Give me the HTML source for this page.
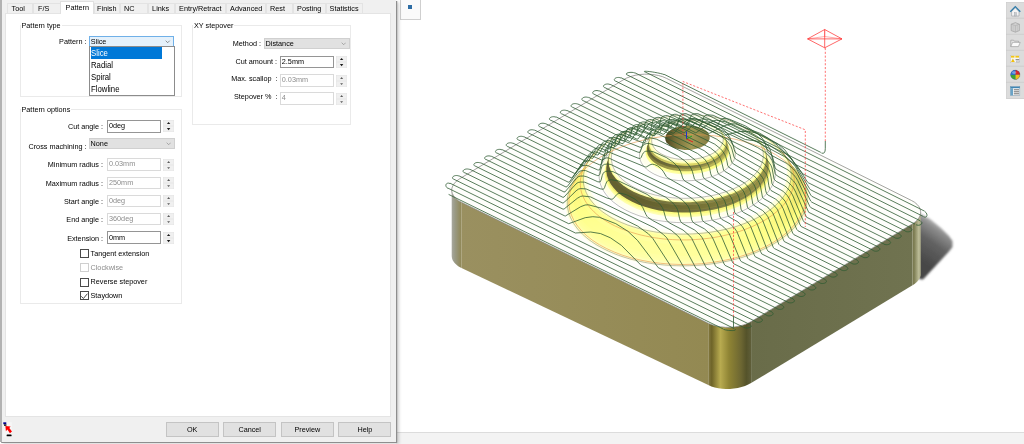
<!DOCTYPE html><html><head><meta charset="utf-8"><title>Pattern</title><style>html,body{margin:0;padding:0;}
body{width:1024px;height:444px;overflow:hidden;background:#fff;position:relative;font-family:"Liberation Sans",Arial,sans-serif;font-size:7.25px;color:#000;}
#view{position:absolute;left:0;top:0;width:1024px;height:444px;}
#status{position:absolute;left:396px;top:432px;width:628px;height:12px;background:#f3f3f3;border-top:1.3px solid #dcdcdc;}
#dlg{position:absolute;left:0;top:0;width:396px;height:442.3px;background:#f0f0f0;box-shadow:1.2px 1px 0 #8e8e8e, 3px 2px 3px rgba(0,0,0,0.18);}
#dlg>*{position:absolute;}
#dlg{will-change:transform}
#dlg{left:0}
.tabs{left:0;top:0;width:396px;height:14px;}
.tab{position:absolute;top:2.6px;height:11px;box-sizing:border-box;border:0.7px solid #e3e3e3;border-bottom:none;background:#f0f0f0;}
.tab span{position:absolute;top:0.7px;white-space:nowrap;}
.tab.sel{top:1.2px;height:13px;background:#fff;border-color:#e0e0e0;}
.tab.sel span{top:0.9px}
.panel{left:5.4px;top:13.4px;width:385.4px;height:403.6px;background:#fff;border:0.6px solid #e4e4e4;box-sizing:border-box;}
.grp{border:0.7px solid #eaeaea;box-sizing:border-box;}
.glab{background:#fff;padding:0 1px;line-height:9px;white-space:nowrap}
.lab{text-align:right;line-height:9px;white-space:nowrap;}
.combo{background:#e1e1e1;border:0.6px solid #d0d0d0;box-sizing:border-box;}
.combo.hot{background:#e5f1fb;border:0.7px solid #6fb0e8;}
.combo span{position:absolute;left:0.6px;top:0.3px;line-height:9px}
.chev{position:absolute;right:2.6px;top:3.1px;width:5.4px;height:3.4px}
.ddl{background:#fff;border:0.7px solid #8c8c8c;box-sizing:border-box;font-size:9.3px;}
.it{position:relative;height:12px;line-height:12.8px;padding-left:0.6px;margin:0 11.3px 0 0.6px;white-space:nowrap}
.it span{display:inline-block;transform:scaleX(0.835);transform-origin:0 50%}
.it.selit{background:#0078d7;color:#fff;height:11.6px;margin-top:0px;margin-bottom:0.4px;line-height:12.8px}
.inp{background:#fff;border:0.75px solid #959595;box-sizing:border-box;}
.inp span{position:absolute;left:1px;top:0.6px;line-height:9px}
.inp.dis{border-color:#dadada;color:#8c8c8c}
.inp.dis span{top:0}
.spin{width:11px;height:12px}
.spin svg{display:block}
.cb{width:9px;height:9px;border:0.8px solid #4a4a4a;background:#fff;box-sizing:border-box;}
.cb.dis{border-color:#cfcfcf}
.cbl{line-height:9px;white-space:nowrap;}
.cbl.dis{color:#8c8c8c}
.btn{top:422px;width:53px;height:15px;background:#e1e1e1;border:0.7px solid #c4c4c4;box-sizing:border-box;text-align:center;line-height:14px;}
</style></head><body><svg id="view" width="1024" height="444" viewBox="0 0 1024 444"><defs><linearGradient id="sh" gradientUnits="userSpaceOnUse" x1="922" y1="262" x2="947" y2="226"><stop offset="0" stop-color="#474747"/><stop offset="0.5" stop-color="#626262"/><stop offset="0.8" stop-color="#8e8e8e"/><stop offset="1" stop-color="#cfcfcf"/></linearGradient><filter id="bl" x="-20%" y="-20%" width="140%" height="140%"><feGaussianBlur stdDeviation="0.9"/></filter><linearGradient id="lf" gradientUnits="userSpaceOnUse" x1="460" y1="0" x2="710" y2="0"><stop offset="0" stop-color="#9a9060"/><stop offset="1" stop-color="#938952"/></linearGradient><linearGradient id="rf" gradientUnits="userSpaceOnUse" x1="747" y1="0" x2="916" y2="0"><stop offset="0" stop-color="#696c49"/><stop offset="1" stop-color="#707350"/></linearGradient><linearGradient id="fc" gradientUnits="userSpaceOnUse" x1="707.4" y1="0" x2="750.7" y2="0"><stop offset="0" stop-color="#8a7f48"/><stop offset="0.1" stop-color="#6e6428"/><stop offset="0.3" stop-color="#b8ab50"/><stop offset="0.5" stop-color="#8f8434"/><stop offset="0.78" stop-color="#6c6632"/><stop offset="0.9" stop-color="#55532a"/><stop offset="1" stop-color="#5e5d38"/></linearGradient><linearGradient id="lc" gradientUnits="userSpaceOnUse" x1="449" y1="0" x2="462" y2="0"><stop offset="0" stop-color="#b4b4b4"/><stop offset="0.45" stop-color="#9a9a86"/><stop offset="1" stop-color="#8f8550"/></linearGradient><linearGradient id="rc" gradientUnits="userSpaceOnUse" x1="914" y1="0" x2="923" y2="0"><stop offset="0" stop-color="#7c7c52"/><stop offset="0.5" stop-color="#b9b994"/><stop offset="1" stop-color="#a0a07c"/></linearGradient><linearGradient id="d1" gradientUnits="userSpaceOnUse" x1="695.6" y1="132.8" x2="679.4" y2="269.9"><stop offset="0" stop-color="#fffff4"/><stop offset=".25" stop-color="#fffff8"/><stop offset=".5" stop-color="#fffffb"/><stop offset=".75" stop-color="#ffffff"/><stop offset="1" stop-color="#ffffff"/></linearGradient><linearGradient id="d2" gradientUnits="userSpaceOnUse" x1="695.5" y1="133.1" x2="679.4" y2="269.4"><stop offset="0" stop-color="#ffffd7"/><stop offset=".25" stop-color="#ffffe1"/><stop offset=".5" stop-color="#ffffec"/><stop offset=".75" stop-color="#fffff6"/><stop offset="1" stop-color="#ffffff"/></linearGradient><linearGradient id="d3" gradientUnits="userSpaceOnUse" x1="695.5" y1="133.3" x2="679.5" y2="268.8"><stop offset="0" stop-color="#ffffb6"/><stop offset=".25" stop-color="#ffffc5"/><stop offset=".5" stop-color="#ffffd4"/><stop offset=".75" stop-color="#ffffe3"/><stop offset="1" stop-color="#fffff3"/></linearGradient><linearGradient id="d4" gradientUnits="userSpaceOnUse" x1="695.4" y1="133.3" x2="679.5" y2="268.1"><stop offset="0" stop-color="#ffffa4"/><stop offset=".25" stop-color="#ffffb4"/><stop offset=".5" stop-color="#ffffc5"/><stop offset=".75" stop-color="#ffffd6"/><stop offset="1" stop-color="#ffffe8"/></linearGradient><linearGradient id="d5" gradientUnits="userSpaceOnUse" x1="695.4" y1="133.3" x2="679.6" y2="267.3"><stop offset="0" stop-color="#ffff8c"/><stop offset=".25" stop-color="#ffff9e"/><stop offset=".5" stop-color="#ffffb0"/><stop offset=".75" stop-color="#ffffc4"/><stop offset="1" stop-color="#ffffd8"/></linearGradient><linearGradient id="d6" gradientUnits="userSpaceOnUse" x1="695.3" y1="133.1" x2="679.6" y2="266.3"><stop offset="0" stop-color="#fffa78"/><stop offset=".25" stop-color="#ffff8a"/><stop offset=".5" stop-color="#ffff9e"/><stop offset=".75" stop-color="#ffffb2"/><stop offset="1" stop-color="#ffffc8"/></linearGradient><linearGradient id="d7" gradientUnits="userSpaceOnUse" x1="695.3" y1="132.8" x2="679.7" y2="265.2"><stop offset="0" stop-color="#eae46e"/><stop offset=".25" stop-color="#ffff80"/><stop offset=".5" stop-color="#ffff93"/><stop offset=".75" stop-color="#ffffa8"/><stop offset="1" stop-color="#ffffbe"/></linearGradient><linearGradient id="d8" gradientUnits="userSpaceOnUse" x1="695.2" y1="132.4" x2="679.7" y2="264.1"><stop offset="0" stop-color="#d5cf64"/><stop offset=".25" stop-color="#fbf476"/><stop offset=".5" stop-color="#ffff89"/><stop offset=".75" stop-color="#ffff9e"/><stop offset="1" stop-color="#ffffb4"/></linearGradient><linearGradient id="d9" gradientUnits="userSpaceOnUse" x1="695.2" y1="131.9" x2="679.8" y2="262.8"><stop offset="0" stop-color="#c1bc5b"/><stop offset=".25" stop-color="#e7e16c"/><stop offset=".5" stop-color="#ffff80"/><stop offset=".75" stop-color="#ffff95"/><stop offset="1" stop-color="#ffffab"/></linearGradient><linearGradient id="d10" gradientUnits="userSpaceOnUse" x1="695.1" y1="130.8" x2="679.9" y2="260.1"><stop offset="0" stop-color="#b8b356"/><stop offset=".25" stop-color="#ddd768"/><stop offset=".5" stop-color="#ffff7b"/><stop offset=".75" stop-color="#ffff90"/><stop offset="1" stop-color="#ffffa6"/></linearGradient><linearGradient id="d11" gradientUnits="userSpaceOnUse" x1="695" y1="129.5" x2="679.9" y2="257.3"><stop offset="0" stop-color="#aba650"/><stop offset=".25" stop-color="#cfc961"/><stop offset=".5" stop-color="#f7f174"/><stop offset=".75" stop-color="#ffff89"/><stop offset="1" stop-color="#ffff9f"/></linearGradient><linearGradient id="d12" gradientUnits="userSpaceOnUse" x1="694.9" y1="128" x2="680" y2="254.3"><stop offset="0" stop-color="#aba650"/><stop offset=".25" stop-color="#cfca61"/><stop offset=".5" stop-color="#f8f174"/><stop offset=".75" stop-color="#ffff89"/><stop offset="1" stop-color="#ffff9f"/></linearGradient><linearGradient id="d13" gradientUnits="userSpaceOnUse" x1="694.7" y1="123.9" x2="680.3" y2="245.7"><stop offset="0" stop-color="#b0ab52"/><stop offset=".25" stop-color="#d4cf63"/><stop offset=".5" stop-color="#fdf677"/><stop offset=".75" stop-color="#ffff8c"/><stop offset="1" stop-color="#ffffa2"/></linearGradient><linearGradient id="d14" gradientUnits="userSpaceOnUse" x1="694.4" y1="120" x2="680.6" y2="237.3"><stop offset="0" stop-color="#c2bd5b"/><stop offset=".25" stop-color="#e8e16d"/><stop offset=".5" stop-color="#ffff80"/><stop offset=".75" stop-color="#ffff95"/><stop offset="1" stop-color="#ffffab"/></linearGradient><linearGradient id="d15" gradientUnits="userSpaceOnUse" x1="694.3" y1="119.4" x2="680.6" y2="236"><stop offset="0" stop-color="#f0e970"/><stop offset=".25" stop-color="#ffff82"/><stop offset=".5" stop-color="#ffff96"/><stop offset=".75" stop-color="#ffffab"/><stop offset="1" stop-color="#ffffc0"/></linearGradient><linearGradient id="d16" gradientUnits="userSpaceOnUse" x1="694.3" y1="119" x2="680.7" y2="234.8"><stop offset="0" stop-color="#ffff99"/><stop offset=".25" stop-color="#ffffaa"/><stop offset=".5" stop-color="#ffffbc"/><stop offset=".75" stop-color="#ffffce"/><stop offset="1" stop-color="#ffffe1"/></linearGradient><linearGradient id="d17" gradientUnits="userSpaceOnUse" x1="694.3" y1="118.9" x2="680.7" y2="234"><stop offset="0" stop-color="#ffffb5"/><stop offset=".25" stop-color="#ffffc4"/><stop offset=".5" stop-color="#ffffd3"/><stop offset=".75" stop-color="#ffffe3"/><stop offset="1" stop-color="#fffff3"/></linearGradient><linearGradient id="d18" gradientUnits="userSpaceOnUse" x1="694.2" y1="119" x2="680.8" y2="232.4"><stop offset="0" stop-color="#ffffbb"/><stop offset=".25" stop-color="#ffffc9"/><stop offset=".5" stop-color="#ffffd8"/><stop offset=".75" stop-color="#ffffe7"/><stop offset="1" stop-color="#fffff6"/></linearGradient><linearGradient id="d19" gradientUnits="userSpaceOnUse" x1="694.1" y1="119.1" x2="680.9" y2="231"><stop offset="0" stop-color="#ffffdf"/><stop offset=".25" stop-color="#ffffe8"/><stop offset=".5" stop-color="#fffff1"/><stop offset=".75" stop-color="#fffffa"/><stop offset="1" stop-color="#ffffff"/></linearGradient><linearGradient id="d20" gradientUnits="userSpaceOnUse" x1="694" y1="119.3" x2="680.9" y2="230.5"><stop offset="0" stop-color="#fffff5"/><stop offset=".25" stop-color="#fffff8"/><stop offset=".5" stop-color="#fffffc"/><stop offset=".75" stop-color="#ffffff"/><stop offset="1" stop-color="#ffffff"/></linearGradient><linearGradient id="d21" gradientUnits="userSpaceOnUse" x1="694" y1="119.6" x2="681" y2="230"><stop offset="0" stop-color="#fffffb"/><stop offset=".25" stop-color="#fffffc"/><stop offset=".5" stop-color="#fffffd"/><stop offset=".75" stop-color="#fffffe"/><stop offset="1" stop-color="#ffffff"/></linearGradient><linearGradient id="d22" gradientUnits="userSpaceOnUse" x1="693.7" y1="121.7" x2="681.2" y2="227.7"><stop offset="0" stop-color="#fffffb"/><stop offset=".25" stop-color="#fffffc"/><stop offset=".5" stop-color="#fffffd"/><stop offset=".75" stop-color="#fffffe"/><stop offset="1" stop-color="#ffffff"/></linearGradient><linearGradient id="d23" gradientUnits="userSpaceOnUse" x1="693.5" y1="123.8" x2="681.5" y2="225.3"><stop offset="0" stop-color="#fffff7"/><stop offset=".25" stop-color="#fffffa"/><stop offset=".5" stop-color="#fffffc"/><stop offset=".75" stop-color="#ffffff"/><stop offset="1" stop-color="#ffffff"/></linearGradient><linearGradient id="d24" gradientUnits="userSpaceOnUse" x1="693.2" y1="125.4" x2="681.8" y2="222.5"><stop offset="0" stop-color="#ffffb9"/><stop offset=".25" stop-color="#ffffc8"/><stop offset=".5" stop-color="#ffffd6"/><stop offset=".75" stop-color="#ffffe5"/><stop offset="1" stop-color="#fffff5"/></linearGradient><linearGradient id="d25" gradientUnits="userSpaceOnUse" x1="692.9" y1="125.4" x2="682" y2="218.1"><stop offset="0" stop-color="#dcd667"/><stop offset=".25" stop-color="#fffc79"/><stop offset=".5" stop-color="#ffff8d"/><stop offset=".75" stop-color="#ffffa2"/><stop offset="1" stop-color="#ffffb8"/></linearGradient><linearGradient id="d26" gradientUnits="userSpaceOnUse" x1="692.9" y1="125" x2="682.1" y2="216.9"><stop offset="0" stop-color="#b0ab52"/><stop offset=".25" stop-color="#d4cf64"/><stop offset=".5" stop-color="#fdf677"/><stop offset=".75" stop-color="#ffff8c"/><stop offset="1" stop-color="#ffffa2"/></linearGradient><linearGradient id="d27" gradientUnits="userSpaceOnUse" x1="691.8" y1="124.5" x2="683.2" y2="215.2"><stop offset="0" stop-color="#86823f"/><stop offset=".25" stop-color="#a4a04d"/><stop offset=".5" stop-color="#c8c25e"/><stop offset=".75" stop-color="#f0ea70"/><stop offset="1" stop-color="#ffff85"/></linearGradient><linearGradient id="d28" gradientUnits="userSpaceOnUse" x1="608.4" y1="155.9" x2="766.5" y2="180.7"><stop offset="0" stop-color="#64612f"/><stop offset=".25" stop-color="#666330"/><stop offset=".5" stop-color="#747136"/><stop offset=".75" stop-color="#888540"/><stop offset="1" stop-color="#a29d4c"/></linearGradient><linearGradient id="d29" gradientUnits="userSpaceOnUse" x1="608.2" y1="157" x2="766.8" y2="173.8"><stop offset="0" stop-color="#64612f"/><stop offset=".25" stop-color="#64612f"/><stop offset=".5" stop-color="#6e6b33"/><stop offset=".75" stop-color="#817d3c"/><stop offset="1" stop-color="#999447"/></linearGradient><linearGradient id="d30" gradientUnits="userSpaceOnUse" x1="628" y1="124" x2="747" y2="199.2"><stop offset="0" stop-color="#64612f"/><stop offset=".25" stop-color="#6e6b34"/><stop offset=".5" stop-color="#7f7c3c"/><stop offset=".75" stop-color="#949046"/><stop offset="1" stop-color="#ada851"/></linearGradient><linearGradient id="d31" gradientUnits="userSpaceOnUse" x1="692.7" y1="115" x2="682.3" y2="203"><stop offset="0" stop-color="#c3be5b"/><stop offset=".25" stop-color="#e9e36d"/><stop offset=".5" stop-color="#ffff81"/><stop offset=".75" stop-color="#ffff96"/><stop offset="1" stop-color="#ffffac"/></linearGradient><linearGradient id="d32" gradientUnits="userSpaceOnUse" x1="692.6" y1="114.4" x2="682.3" y2="201.6"><stop offset="0" stop-color="#ffff95"/><stop offset=".25" stop-color="#ffffa6"/><stop offset=".5" stop-color="#ffffb8"/><stop offset=".75" stop-color="#ffffcb"/><stop offset="1" stop-color="#ffffde"/></linearGradient><linearGradient id="d33" gradientUnits="userSpaceOnUse" x1="692.6" y1="114.3" x2="682.4" y2="200.7"><stop offset="0" stop-color="#ffffa0"/><stop offset=".25" stop-color="#ffffb0"/><stop offset=".5" stop-color="#ffffc2"/><stop offset=".75" stop-color="#ffffd3"/><stop offset="1" stop-color="#ffffe6"/></linearGradient><linearGradient id="d34" gradientUnits="userSpaceOnUse" x1="692.5" y1="114.2" x2="682.4" y2="199.9"><stop offset="0" stop-color="#ffffb1"/><stop offset=".25" stop-color="#ffffc0"/><stop offset=".5" stop-color="#ffffd0"/><stop offset=".75" stop-color="#ffffe0"/><stop offset="1" stop-color="#fffff0"/></linearGradient><linearGradient id="d35" gradientUnits="userSpaceOnUse" x1="692.5" y1="114.2" x2="682.5" y2="199.1"><stop offset="0" stop-color="#ffffd3"/><stop offset=".25" stop-color="#ffffde"/><stop offset=".5" stop-color="#ffffe9"/><stop offset=".75" stop-color="#fffff4"/><stop offset="1" stop-color="#ffffff"/></linearGradient><linearGradient id="d36" gradientUnits="userSpaceOnUse" x1="692.4" y1="114.4" x2="682.5" y2="198.5"><stop offset="0" stop-color="#ffffed"/><stop offset=".25" stop-color="#fffff3"/><stop offset=".5" stop-color="#fffff8"/><stop offset=".75" stop-color="#fffffe"/><stop offset="1" stop-color="#ffffff"/></linearGradient><linearGradient id="d37" gradientUnits="userSpaceOnUse" x1="692.3" y1="114.9" x2="682.6" y2="197.5"><stop offset="0" stop-color="#ffffef"/><stop offset=".25" stop-color="#fffff4"/><stop offset=".5" stop-color="#fffff9"/><stop offset=".75" stop-color="#fffffe"/><stop offset="1" stop-color="#ffffff"/></linearGradient><linearGradient id="d38" gradientUnits="userSpaceOnUse" x1="692.1" y1="116.6" x2="682.9" y2="194.7"><stop offset="0" stop-color="#fffff8"/><stop offset=".25" stop-color="#fffffa"/><stop offset=".5" stop-color="#fffffd"/><stop offset=".75" stop-color="#ffffff"/><stop offset="1" stop-color="#ffffff"/></linearGradient><linearGradient id="d39" gradientUnits="userSpaceOnUse" x1="692" y1="117.3" x2="683" y2="193.8"><stop offset="0" stop-color="#fffff9"/><stop offset=".25" stop-color="#fffffb"/><stop offset=".5" stop-color="#fffffd"/><stop offset=".75" stop-color="#ffffff"/><stop offset="1" stop-color="#ffffff"/></linearGradient><linearGradient id="d40" gradientUnits="userSpaceOnUse" x1="691.7" y1="119.3" x2="683.2" y2="191.4"><stop offset="0" stop-color="#fffff9"/><stop offset=".25" stop-color="#fffffb"/><stop offset=".5" stop-color="#fffffd"/><stop offset=".75" stop-color="#ffffff"/><stop offset="1" stop-color="#ffffff"/></linearGradient><linearGradient id="d41" gradientUnits="userSpaceOnUse" x1="691.5" y1="121.4" x2="683.5" y2="189"><stop offset="0" stop-color="#fffff9"/><stop offset=".25" stop-color="#fffffb"/><stop offset=".5" stop-color="#fffffd"/><stop offset=".75" stop-color="#ffffff"/><stop offset="1" stop-color="#ffffff"/></linearGradient><linearGradient id="d42" gradientUnits="userSpaceOnUse" x1="691.2" y1="123.4" x2="683.8" y2="186.6"><stop offset="0" stop-color="#fffff9"/><stop offset=".25" stop-color="#fffffb"/><stop offset=".5" stop-color="#fffffd"/><stop offset=".75" stop-color="#ffffff"/><stop offset="1" stop-color="#ffffff"/></linearGradient><linearGradient id="d43" gradientUnits="userSpaceOnUse" x1="690.9" y1="125.4" x2="684" y2="184.2"><stop offset="0" stop-color="#fffff9"/><stop offset=".25" stop-color="#fffffb"/><stop offset=".5" stop-color="#fffffd"/><stop offset=".75" stop-color="#ffffff"/><stop offset="1" stop-color="#ffffff"/></linearGradient><linearGradient id="d44" gradientUnits="userSpaceOnUse" x1="690.7" y1="127.5" x2="684.3" y2="181.8"><stop offset="0" stop-color="#fffff1"/><stop offset=".25" stop-color="#fffff5"/><stop offset=".5" stop-color="#fffffa"/><stop offset=".75" stop-color="#ffffff"/><stop offset="1" stop-color="#ffffff"/></linearGradient><linearGradient id="d45" gradientUnits="userSpaceOnUse" x1="690.6" y1="127.7" x2="684.3" y2="181.3"><stop offset="0" stop-color="#ffffdf"/><stop offset=".25" stop-color="#ffffe8"/><stop offset=".5" stop-color="#fffff0"/><stop offset=".75" stop-color="#fffffa"/><stop offset="1" stop-color="#ffffff"/></linearGradient><linearGradient id="d46" gradientUnits="userSpaceOnUse" x1="690.6" y1="128" x2="684.4" y2="180.8"><stop offset="0" stop-color="#ffffce"/><stop offset=".25" stop-color="#ffffd9"/><stop offset=".5" stop-color="#ffffe5"/><stop offset=".75" stop-color="#fffff2"/><stop offset="1" stop-color="#fffffe"/></linearGradient><linearGradient id="d47" gradientUnits="userSpaceOnUse" x1="690.5" y1="128.2" x2="684.5" y2="179.5"><stop offset="0" stop-color="#ffffc2"/><stop offset=".25" stop-color="#ffffcf"/><stop offset=".5" stop-color="#ffffdd"/><stop offset=".75" stop-color="#ffffeb"/><stop offset="1" stop-color="#fffff9"/></linearGradient><linearGradient id="d48" gradientUnits="userSpaceOnUse" x1="690.2" y1="128" x2="684.7" y2="174.8"><stop offset="0" stop-color="#c2bd5b"/><stop offset=".25" stop-color="#e8e26d"/><stop offset=".5" stop-color="#ffff80"/><stop offset=".75" stop-color="#ffff95"/><stop offset="1" stop-color="#ffffac"/></linearGradient><linearGradient id="d49" gradientUnits="userSpaceOnUse" x1="690.2" y1="127.4" x2="684.8" y2="173.4"><stop offset="0" stop-color="#969246"/><stop offset=".25" stop-color="#b9b457"/><stop offset=".5" stop-color="#e0da69"/><stop offset=".75" stop-color="#ffff7d"/><stop offset="1" stop-color="#ffff94"/></linearGradient><linearGradient id="d50" gradientUnits="userSpaceOnUse" x1="674" y1="125.3" x2="700.9" y2="172.9"><stop offset="0" stop-color="#6f6c34"/><stop offset=".25" stop-color="#7e7a3b"/><stop offset=".5" stop-color="#908c44"/><stop offset=".75" stop-color="#a6a14e"/><stop offset="1" stop-color="#bdb859"/></linearGradient><linearGradient id="d51" gradientUnits="userSpaceOnUse" x1="653.4" y1="132" x2="721.6" y2="161.9"><stop offset="0" stop-color="#64612f"/><stop offset=".25" stop-color="#6b6832"/><stop offset=".5" stop-color="#7b783a"/><stop offset=".75" stop-color="#908c44"/><stop offset="1" stop-color="#a9a54f"/></linearGradient><linearGradient id="d52" gradientUnits="userSpaceOnUse" x1="684.4" y1="122.7" x2="690.5" y2="165.9"><stop offset="0" stop-color="#7b783a"/><stop offset=".25" stop-color="#908c43"/><stop offset=".5" stop-color="#a7a34e"/><stop offset=".75" stop-color="#c2bd5b"/><stop offset="1" stop-color="#dfd968"/></linearGradient><linearGradient id="d53" gradientUnits="userSpaceOnUse" x1="690" y1="121" x2="684.9" y2="164"><stop offset="0" stop-color="#ccc760"/><stop offset=".25" stop-color="#f2ec72"/><stop offset=".5" stop-color="#ffff85"/><stop offset=".75" stop-color="#ffff9a"/><stop offset="1" stop-color="#ffffb0"/></linearGradient><linearGradient id="d54" gradientUnits="userSpaceOnUse" x1="690" y1="120.5" x2="685" y2="162.6"><stop offset="0" stop-color="#ffff83"/><stop offset=".25" stop-color="#ffff95"/><stop offset=".5" stop-color="#ffffa8"/><stop offset=".75" stop-color="#ffffbb"/><stop offset="1" stop-color="#ffffd0"/></linearGradient><linearGradient id="d55" gradientUnits="userSpaceOnUse" x1="689.9" y1="120.2" x2="685" y2="161.6"><stop offset="0" stop-color="#ffff8c"/><stop offset=".25" stop-color="#ffff9e"/><stop offset=".5" stop-color="#ffffb0"/><stop offset=".75" stop-color="#ffffc4"/><stop offset="1" stop-color="#ffffd8"/></linearGradient><linearGradient id="d56" gradientUnits="userSpaceOnUse" x1="689.9" y1="120.1" x2="685.1" y2="160.7"><stop offset="0" stop-color="#ffffa3"/><stop offset=".25" stop-color="#ffffb3"/><stop offset=".5" stop-color="#ffffc4"/><stop offset=".75" stop-color="#ffffd6"/><stop offset="1" stop-color="#ffffe8"/></linearGradient><linearGradient id="d57" gradientUnits="userSpaceOnUse" x1="689.8" y1="120" x2="685.1" y2="159.8"><stop offset="0" stop-color="#ffffc8"/><stop offset=".25" stop-color="#ffffd4"/><stop offset=".5" stop-color="#ffffe1"/><stop offset=".75" stop-color="#ffffee"/><stop offset="1" stop-color="#fffffc"/></linearGradient><linearGradient id="d58" gradientUnits="userSpaceOnUse" x1="689.8" y1="120.1" x2="685.2" y2="159.2"><stop offset="0" stop-color="#ffffde"/><stop offset=".25" stop-color="#ffffe7"/><stop offset=".5" stop-color="#fffff0"/><stop offset=".75" stop-color="#fffff9"/><stop offset="1" stop-color="#ffffff"/></linearGradient><linearGradient id="d59" gradientUnits="userSpaceOnUse" x1="689.7" y1="120.5" x2="685.3" y2="158"><stop offset="0" stop-color="#ffffdf"/><stop offset=".25" stop-color="#ffffe8"/><stop offset=".5" stop-color="#fffff1"/><stop offset=".75" stop-color="#fffffa"/><stop offset="1" stop-color="#ffffff"/></linearGradient><linearGradient id="d60" gradientUnits="userSpaceOnUse" x1="689.4" y1="121.8" x2="685.5" y2="154.8"><stop offset="0" stop-color="#fffff6"/><stop offset=".25" stop-color="#fffff9"/><stop offset=".5" stop-color="#fffffc"/><stop offset=".75" stop-color="#ffffff"/><stop offset="1" stop-color="#ffffff"/></linearGradient><linearGradient id="d61" gradientUnits="userSpaceOnUse" x1="689.3" y1="122.4" x2="685.6" y2="153.9"><stop offset="0" stop-color="#fffff7"/><stop offset=".25" stop-color="#fffffa"/><stop offset=".5" stop-color="#fffffc"/><stop offset=".75" stop-color="#ffffff"/><stop offset="1" stop-color="#ffffff"/></linearGradient><linearGradient id="d62" gradientUnits="userSpaceOnUse" x1="689.1" y1="124.4" x2="685.9" y2="151.4"><stop offset="0" stop-color="#fffff8"/><stop offset=".25" stop-color="#fffffa"/><stop offset=".5" stop-color="#fffffc"/><stop offset=".75" stop-color="#ffffff"/><stop offset="1" stop-color="#ffffff"/></linearGradient><linearGradient id="hg" gradientUnits="userSpaceOnUse" x1="665" y1="0" x2="709" y2="0"><stop offset="0" stop-color="#4a4520"/><stop offset="0.25" stop-color="#77703a"/><stop offset="0.6" stop-color="#a39a56"/><stop offset="1" stop-color="#857d44"/></linearGradient></defs><path d="M919,213 L930,219 L941,228 L949,236 L952.5,241 L952.5,247 L949,251.5 L923,279.5 L919,279 Z" fill="url(#sh)" filter="url(#bl)"/><path d="M461.5,202.3L708.3,323.3 708.3,385.1 461.5,268Z" fill="url(#lf)"/><path d="M751.1,321.6L912.5,223.8 912.5,285.3 751.1,383.1Z" fill="url(#rf)"/><path d="M751.1,321.6L748.2,323.1 745,324.4 741.5,325.5 737.8,326.4 733.9,327 730,327.3 726,327.3 722.1,327 718.4,326.5 714.8,325.7 711.4,324.6 708.3,323.3 708.3,385.1 711.4,386.4 714.8,387.4 718.4,388.2 722.1,388.7 726,388.9 730,388.9 733.9,388.5 737.8,387.9 741.5,387.1 745,386 748.2,384.6 751.1,383.1Z" fill="url(#fc)"/><path d="M461.5,202.3L460,201.5 458.6,200.7 457.3,199.8 456.2,198.8 455.1,197.9 454.2,196.8 453.5,195.8 452.8,194.7 452.3,193.5 452,192.4 451.8,191.3 451.7,190.1 451.7,255.9 451.8,257 452,258.2 452.3,259.3 452.8,260.4 453.5,261.5 454.2,262.6 455.1,263.6 456.2,264.6 457.3,265.5 458.6,266.4 460,267.2 461.5,268Z" fill="url(#lc)"/><path d="M920.7,212.5L920.7,213.5 920.5,214.5 920.1,215.6 919.7,216.6 919.2,217.6 918.5,218.5 917.8,219.5 916.9,220.4 916,221.3 914.9,222.2 913.8,223 912.5,223.8 912.5,285.3 913.8,284.5 914.9,283.7 916,282.8 916.9,281.9 917.8,281 918.5,280 919.2,279.1 919.7,278.1 920.1,277.1 920.5,276.1 920.7,275 920.7,274Z" fill="url(#rc)"/><path d="M623.2,79.9L626.7,78 630.7,76.5 635.1,75.3 639.7,74.5 644.5,74.2 649.3,74.2 654,74.7 658.5,75.5 662.7,76.7 666.4,78.3 911.3,200.4 914.5,202.2 917.1,204.4 919,206.7 920.2,209.2 920.7,211.8 920.5,214.4 919.5,216.9 917.8,219.4 915.5,221.7 912.5,223.8 751.1,321.6 747.6,323.4 743.6,324.9 739.3,326.1 734.7,326.9 730,327.3 725.3,327.3 720.6,326.8 716.2,326 712,324.8 708.3,323.3 461.5,202.3 458.3,200.5 455.6,198.3 453.6,195.9 452.3,193.4 451.7,190.8 451.9,188.2 452.9,185.6 454.6,183.1 456.9,180.8 459.9,178.6Z" fill="#fefefb" stroke="#7c7c78" stroke-width="0.7"/><g><path d="M776.9,245.5L768.2,250.3 758.8,254.6 748.7,258.3 738,261.6 726.8,264.2 715.3,266.3 703.5,267.7 691.5,268.5 679.4,268.6 667.5,268.1 655.7,267 644.2,265.2 633.2,262.8 622.6,259.8 612.7,256.3 603.4,252.2 595,247.6 587.5,242.6 580.9,237.2 575.4,231.4 570.9,225.3 567.6,219 565.4,212.6 564.3,206 564.5,199.3 565.9,192.7 568.4,186.2 572.1,179.8 576.9,173.6 582.8,167.7 589.7,162.1 597.5,156.9 606.2,152.1 615.7,147.8 625.9,144 636.6,140.7 647.9,138.1 659.5,136.1 671.4,134.6 683.5,133.9 695.6,133.8 707.6,134.3 719.4,135.5 730.8,137.3 741.9,139.8 752.4,142.8 762.3,146.4 771.5,150.5 779.8,155.1 787.3,160.1 793.8,165.6 799.3,171.4 803.7,177.4 806.9,183.7 809.1,190.2 810,196.7 809.8,203.3 808.4,209.9 805.8,216.4 802.1,222.8 797.3,228.9 791.5,234.8 784.6,240.3Z" fill="url(#d1)"/><path d="M776.4,245.2L767.8,249.9 758.4,254.2 748.4,258 737.7,261.2 726.6,263.8 715.1,265.8 703.4,267.3 691.4,268 679.5,268.2 667.6,267.7 655.9,266.6 644.5,264.8 633.5,262.4 623,259.4 613.1,255.9 603.9,251.9 595.5,247.3 588.1,242.3 581.5,236.9 576,231.2 571.6,225.1 568.2,218.9 566.1,212.4 565,205.9 565.2,199.3 566.6,192.7 569.1,186.2 572.8,179.8 577.5,173.7 583.4,167.8 590.2,162.2 598,157.1 606.7,152.3 616.1,148 626.2,144.2 636.9,141 648.1,138.4 659.7,136.4 671.5,135 683.5,134.2 695.5,134.1 707.4,134.6 719.2,135.8 730.6,137.6 741.6,140 752.1,143 761.9,146.6 771,150.7 779.3,155.3 786.7,160.3 793.2,165.7 798.6,171.5 803,177.5 806.3,183.7 808.4,190.2 809.3,196.7 809.1,203.3 807.7,209.8 805.2,216.3 801.5,222.6 796.7,228.7 790.9,234.5 784.1,240.1Z" fill="url(#d2)"/><path d="M775.9,244.7L767.3,249.4 758,253.7 748,257.4 737.5,260.6 726.4,263.2 715,265.3 703.3,266.7 691.4,267.5 679.5,267.6 667.7,267.1 656.1,266 644.7,264.2 633.8,261.8 623.3,258.9 613.5,255.4 604.4,251.3 596.1,246.8 588.6,241.9 582.1,236.5 576.6,230.8 572.2,224.8 568.9,218.6 566.7,212.2 565.7,205.6 565.9,199.1 567.3,192.5 569.8,186.1 573.4,179.7 578.2,173.6 584,167.8 590.8,162.2 598.5,157.1 607.1,152.4 616.5,148.1 626.6,144.3 637.2,141.1 648.3,138.5 659.8,136.5 671.6,135.1 683.5,134.4 695.5,134.3 707.3,134.8 719,136 730.3,137.8 741.3,140.2 751.7,143.2 761.5,146.7 770.5,150.8 778.8,155.3 786.2,160.3 792.6,165.7 798,171.4 802.3,177.4 805.6,183.6 807.7,190 808.6,196.5 808.4,203 807,209.5 804.5,216 800.8,222.2 796.1,228.3 790.3,234.1 783.5,239.6Z" fill="url(#d3)"/><path d="M775.3,244.1L766.9,248.8 757.6,253 747.7,256.7 737.2,259.9 726.2,262.5 714.8,264.5 703.2,265.9 691.4,266.7 679.6,266.9 667.8,266.4 656.2,265.2 645,263.5 634.1,261.1 623.7,258.2 613.9,254.7 604.9,250.7 596.6,246.2 589.2,241.3 582.7,235.9 577.3,230.3 572.9,224.3 569.6,218.1 567.4,211.7 566.4,205.3 566.6,198.7 568,192.2 570.4,185.8 574.1,179.5 578.8,173.4 584.6,167.6 591.3,162.1 599,157 607.6,152.3 616.9,148 626.9,144.3 637.5,141.1 648.6,138.5 660,136.5 671.7,135.1 683.5,134.4 695.4,134.3 707.2,134.8 718.8,136 730.1,137.8 741,140.2 751.3,143.1 761.1,146.7 770.1,150.7 778.3,155.2 785.6,160.2 792,165.5 797.4,171.2 801.7,177.2 804.9,183.4 807,189.7 807.9,196.2 807.7,202.7 806.3,209.1 803.8,215.5 800.2,221.8 795.5,227.8 789.7,233.6 783,239Z" fill="url(#d4)"/><path d="M774.8,243.4L766.4,248.1 757.2,252.3 747.3,256 736.9,259.1 726,261.7 714.7,263.7 703.1,265.1 691.4,265.9 679.6,266 667.9,265.5 656.4,264.4 645.2,262.7 634.4,260.4 624.1,257.4 614.4,254 605.3,250 597.1,245.5 589.8,240.6 583.3,235.3 577.9,229.6 573.5,223.7 570.3,217.6 568.1,211.2 567.1,204.8 567.3,198.3 568.6,191.8 571.1,185.4 574.7,179.2 579.4,173.1 585.2,167.4 591.9,161.9 599.5,156.8 608,152.1 617.3,147.9 627.3,144.2 637.8,141 648.8,138.4 660.1,136.5 671.8,135.1 683.6,134.3 695.4,134.2 707.1,134.7 718.6,135.9 729.9,137.7 740.7,140.1 751,143 760.6,146.5 769.6,150.6 777.8,155.1 785,160 791.4,165.3 796.7,171 801,176.9 804.2,183 806.3,189.3 807.2,195.8 807,202.2 805.7,208.6 803.2,215 799.5,221.2 794.9,227.2 789.1,232.9 782.4,238.4Z" fill="url(#d5)"/><path d="M774.3,242.6L765.9,247.2 756.8,251.4 747,255.1 736.6,258.2 725.7,260.8 714.5,262.8 703,264.2 691.4,264.9 679.7,265.1 668,264.6 656.6,263.5 645.4,261.8 634.7,259.4 624.4,256.5 614.8,253.1 605.8,249.1 597.6,244.7 590.3,239.8 583.9,234.5 578.6,228.9 574.2,223 571,216.9 568.8,210.6 567.8,204.2 568,197.7 569.3,191.3 571.8,185 575.4,178.8 580,172.7 585.8,167 592.4,161.6 600,156.5 608.5,151.8 617.7,147.6 627.6,144 638.1,140.8 649,138.2 660.3,136.3 671.9,134.9 683.6,134.1 695.3,134 707,134.6 718.4,135.7 729.6,137.5 740.4,139.9 750.6,142.8 760.2,146.3 769.1,150.3 777.2,154.8 784.5,159.7 790.8,164.9 796.1,170.6 800.4,176.5 803.6,182.6 805.6,188.8 806.5,195.2 806.3,201.6 805,208 802.5,214.3 798.9,220.5 794.2,226.5 788.6,232.2 781.9,237.6Z" fill="url(#d6)"/><path d="M773.8,241.7L765.5,246.3 756.4,250.4 746.6,254.1 736.3,257.2 725.5,259.8 714.3,261.7 702.9,263.1 691.3,263.9 679.7,264 668.2,263.5 656.8,262.4 645.7,260.7 635,258.4 624.8,255.5 615.2,252.1 606.3,248.1 598.2,243.7 590.9,238.9 584.5,233.6 579.2,228 574.9,222.2 571.6,216.1 569.5,209.8 568.5,203.5 568.7,197.1 570,190.7 572.5,184.4 576,178.2 580.7,172.2 586.3,166.5 593,161.1 600.6,156 609,151.4 618.1,147.3 628,143.6 638.4,140.5 649.2,137.9 660.5,135.9 672,134.6 683.6,133.8 695.3,133.7 706.9,134.3 718.3,135.4 729.4,137.2 740,139.5 750.2,142.4 759.8,145.9 768.6,149.9 776.7,154.3 783.9,159.2 790.2,164.5 795.5,170 799.7,175.9 802.9,182 804.9,188.2 805.9,194.5 805.6,200.9 804.3,207.3 801.8,213.6 798.2,219.7 793.6,225.6 788,231.3 781.3,236.7Z" fill="url(#d7)"/><path d="M773.3,240.7L765,245.2 756,249.3 746.3,253 736,256.1 725.3,258.6 714.2,260.6 702.8,262 691.3,262.7 679.8,262.9 668.3,262.4 657,261.3 645.9,259.6 635.3,257.3 625.2,254.4 615.6,251 606.8,247.1 598.7,242.7 591.5,237.9 585.2,232.6 579.8,227.1 575.5,221.3 572.3,215.2 570.2,209 569.2,202.7 569.4,196.3 570.7,189.9 573.1,183.7 576.7,177.5 581.3,171.6 586.9,165.9 593.6,160.5 601.1,155.5 609.4,150.9 618.5,146.8 628.3,143.1 638.6,140 649.5,137.5 660.6,135.5 672.1,134.2 683.6,133.4 695.2,133.3 706.8,133.9 718.1,135 729.1,136.7 739.7,139.1 749.9,142 759.4,145.4 768.2,149.4 776.2,153.8 783.4,158.7 789.6,163.9 794.8,169.4 799.1,175.3 802.2,181.3 804.2,187.5 805.2,193.8 804.9,200.1 803.6,206.5 801.1,212.7 797.6,218.8 793,224.7 787.4,230.3 780.8,235.7Z" fill="url(#d8)"/><path d="M772.8,239.5L764.6,244.1 755.6,248.2 745.9,251.8 735.7,254.9 725.1,257.4 714,259.4 702.7,260.7 691.3,261.5 679.8,261.6 668.4,261.1 657.1,260 646.2,258.3 635.6,256.1 625.5,253.2 616.1,249.8 607.3,245.9 599.2,241.6 592,236.8 585.8,231.6 580.5,226.1 576.2,220.3 573,214.3 570.9,208.1 569.9,201.8 570.1,195.4 571.4,189.1 573.8,182.9 577.3,176.8 581.9,170.9 587.5,165.2 594.1,159.9 601.6,154.9 609.9,150.3 618.9,146.2 628.7,142.6 638.9,139.5 649.7,137 660.8,135 672.1,133.7 683.6,133 695.2,132.9 706.6,133.4 717.9,134.5 728.9,136.2 739.4,138.6 749.5,141.5 758.9,144.9 767.7,148.8 775.7,153.2 782.8,158 789,163.2 794.2,168.7 798.4,174.5 801.5,180.5 803.6,186.7 804.5,193 804.3,199.3 802.9,205.5 800.5,211.7 797,217.8 792.4,223.7 786.8,229.3 780.3,234.6Z" fill="url(#d9)"/><path d="M771.8,237.1L763.7,241.6 754.8,245.7 745.3,249.2 735.2,252.3 724.6,254.8 713.7,256.7 702.6,258.1 691.2,258.8 679.9,258.9 668.6,258.5 657.5,257.4 646.7,255.7 636.2,253.4 626.3,250.6 616.9,247.3 608.2,243.4 600.3,239.1 593.2,234.4 587,229.2 581.7,223.8 577.5,218.1 574.4,212.1 572.3,206 571.3,199.8 571.5,193.5 572.8,187.3 575.2,181.1 578.7,175.1 583.2,169.3 588.7,163.7 595.2,158.4 602.6,153.5 610.8,149 619.8,144.9 629.4,141.3 639.5,138.3 650.1,135.8 661.1,133.9 672.3,132.5 683.7,131.8 695.1,131.7 706.4,132.2 717.5,133.3 728.4,135 738.8,137.3 748.7,140.2 758.1,143.6 766.7,147.5 774.6,151.8 781.7,156.6 787.8,161.7 792.9,167.1 797.1,172.9 800.2,178.8 802.2,184.9 803.1,191.1 802.9,197.3 801.6,203.5 799.1,209.7 795.7,215.6 791.1,221.4 785.6,227 779.2,232.2Z" fill="url(#d10)"/><path d="M770.8,234.6L762.8,239 754,243 744.6,246.5 734.6,249.5 724.2,252 713.4,253.9 702.4,255.2 691.2,256 680,256.1 668.8,255.6 657.9,254.6 647.2,252.9 636.8,250.7 627,247.9 617.7,244.6 609.2,240.8 601.3,236.5 594.3,231.8 588.2,226.8 583,221.4 578.8,215.7 575.7,209.9 573.7,203.8 572.7,197.7 572.9,191.5 574.2,185.3 576.5,179.3 580,173.3 584.4,167.5 589.9,162 596.3,156.8 603.6,151.9 611.7,147.5 620.6,143.5 630.1,139.9 640.1,136.9 650.6,134.4 661.4,132.5 672.5,131.2 683.7,130.5 695,130.4 706.2,130.9 717.2,132 727.9,133.7 738.2,136 748,138.8 757.2,142.1 765.8,146 773.6,150.3 780.5,155 786.6,160 791.7,165.4 795.8,171.1 798.8,176.9 800.8,183 801.7,189.1 801.5,195.2 800.2,201.4 797.8,207.4 794.4,213.3 789.9,219.1 784.4,224.6 778.1,229.7Z" fill="url(#d11)"/><path d="M769.8,231.8L761.8,236.2 753.2,240.2 743.9,243.6 734,246.6 723.7,249.1 713.1,251 702.2,252.3 691.2,253 680.1,253.1 669.1,252.7 658.2,251.6 647.6,250 637.5,247.8 627.7,245 618.6,241.7 610.1,238 602.4,233.8 595.4,229.1 589.4,224.2 584.3,218.8 580.2,213.3 577.1,207.4 575.1,201.5 574.1,195.4 574.3,189.3 575.5,183.2 577.9,177.2 581.3,171.3 585.7,165.6 591.1,160.2 597.4,155 604.6,150.2 612.7,145.8 621.4,141.8 630.8,138.4 640.7,135.4 651,132.9 661.7,131.1 672.7,129.8 683.8,129.1 694.9,129 706,129.4 716.8,130.5 727.4,132.2 737.6,134.5 747.3,137.2 756.4,140.5 764.8,144.3 772.5,148.6 779.4,153.2 785.4,158.2 790.4,163.5 794.5,169.1 797.5,174.9 799.4,180.9 800.3,186.9 800.1,193 798.8,199.1 796.5,205 793.1,210.9 788.7,216.5 783.3,222 777,227.1Z" fill="url(#d12)"/><path d="M766.9,224L759.2,228.3 750.9,232.1 741.9,235.4 732.4,238.3 722.5,240.7 712.2,242.5 701.7,243.7 691,244.5 680.3,244.6 669.7,244.1 659.2,243.1 649,241.5 639.2,239.4 629.8,236.8 621,233.6 612.8,230 605.4,225.9 598.7,221.4 592.8,216.6 587.9,211.5 583.9,206.1 581,200.5 579,194.7 578.1,188.9 578.3,183 579.5,177.1 581.7,171.3 585,165.6 589.3,160.1 594.5,154.9 600.6,149.9 607.6,145.3 615.3,141 623.7,137.2 632.8,133.8 642.3,131 652.3,128.6 662.6,126.8 673.2,125.5 683.9,124.9 694.6,124.8 705.3,125.2 715.8,126.3 726,127.9 735.8,130.1 745.2,132.8 754,135.9 762.1,139.6 769.5,143.7 776.2,148.2 781.9,153 786.8,158.1 790.7,163.5 793.6,169.1 795.5,174.9 796.4,180.7 796.2,186.6 794.9,192.4 792.6,198.2 789.4,203.8 785.1,209.3 779.9,214.5 773.8,219.4Z" fill="url(#d13)"/><path d="M764,216.5L756.6,220.6 748.6,224.2 739.9,227.5 730.8,230.2 721.2,232.5 711.3,234.3 701.2,235.5 690.9,236.2 680.6,236.3 670.4,235.8 660.3,234.9 650.4,233.3 641,231.3 631.9,228.7 623.4,225.7 615.5,222.2 608.3,218.3 601.9,214 596.3,209.3 591.5,204.4 587.7,199.2 584.9,193.8 583,188.3 582.1,182.6 582.3,176.9 583.4,171.3 585.6,165.7 588.8,160.2 592.9,154.9 597.9,149.9 603.8,145.1 610.5,140.6 617.9,136.5 626,132.8 634.8,129.6 644,126.8 653.6,124.5 663.6,122.8 673.7,121.6 684,120.9 694.4,120.8 704.7,121.3 714.8,122.3 724.6,123.9 734.1,125.9 743.1,128.5 751.5,131.6 759.4,135.1 766.6,139.1 772.9,143.4 778.5,148 783.2,153 787,158.2 789.8,163.6 791.6,169.1 792.4,174.7 792.2,180.4 791,186 788.8,191.6 785.7,197 781.6,202.3 776.6,207.3 770.7,212Z" fill="url(#d14)"/><path d="M763.5,215.3L756.2,219.3 748.2,223 739.6,226.2 730.5,228.9 721,231.2 711.1,232.9 701.1,234.1 690.9,234.8 680.6,234.9 670.5,234.5 660.4,233.5 650.7,232 641.3,230 632.3,227.4 623.9,224.4 616,220.9 608.9,217.1 602.5,212.8 596.9,208.2 592.2,203.3 588.4,198.1 585.5,192.7 583.7,187.2 582.8,181.6 583,176 584.1,170.4 586.3,164.8 589.4,159.4 593.5,154.1 598.5,149.1 604.3,144.3 611,139.9 618.4,135.8 626.5,132.2 635.1,128.9 644.3,126.2 653.8,123.9 663.7,122.2 673.8,121 684.1,120.4 694.3,120.3 704.5,120.7 714.6,121.7 724.3,123.3 733.7,125.3 742.7,127.9 751.1,131 758.9,134.5 766,138.4 772.4,142.7 777.9,147.3 782.6,152.2 786.3,157.3 789.1,162.7 790.9,168.2 791.7,173.8 791.5,179.4 790.3,185 788.2,190.5 785,195.9 780.9,201.1 776,206.1 770.1,210.9Z" fill="url(#d15)"/><path d="M763,214.3L755.7,218.3 747.8,221.9 739.2,225.1 730.2,227.8 720.7,230.1 711,231.8 701,233 690.9,233.7 680.7,233.8 670.6,233.4 660.6,232.4 650.9,230.9 641.6,228.9 632.7,226.4 624.3,223.4 616.5,219.9 609.4,216 603,211.8 597.5,207.2 592.8,202.3 589,197.2 586.2,191.9 584.4,186.4 583.5,180.9 583.7,175.3 584.8,169.7 587,164.1 590.1,158.7 594.1,153.5 599.1,148.5 604.9,143.8 611.5,139.4 618.9,135.4 626.9,131.7 635.4,128.5 644.5,125.8 654,123.5 663.9,121.8 673.9,120.6 684.1,120 694.3,119.9 704.4,120.3 714.4,121.3 724.1,122.9 733.4,124.9 742.3,127.5 750.7,130.5 758.4,134 765.5,137.9 771.8,142.1 777.3,146.7 781.9,151.6 785.6,156.7 788.4,162 790.2,167.5 791,173 790.8,178.6 789.6,184.2 787.5,189.7 784.4,195 780.3,200.2 775.4,205.2 769.6,209.9Z" fill="url(#d16)"/><path d="M762.5,213.5L755.3,217.5 747.4,221.1 738.9,224.3 729.9,227 720.5,229.2 710.8,230.9 700.9,232.1 690.8,232.8 680.7,232.9 670.7,232.5 660.8,231.5 651.2,230 641.9,228 633,225.5 624.7,222.5 617,219.1 609.9,215.3 603.6,211.1 598.1,206.5 593.4,201.7 589.7,196.6 586.9,191.3 585.1,185.9 584.2,180.3 584.4,174.8 585.5,169.2 587.6,163.7 590.7,158.4 594.8,153.2 599.7,148.2 605.5,143.5 612,139.1 619.3,135.1 627.3,131.5 635.8,128.3 644.8,125.6 654.3,123.4 664,121.7 674,120.5 684.1,119.9 694.2,119.8 704.3,120.2 714.2,121.2 723.8,122.7 733.1,124.8 742,127.3 750.3,130.3 758,133.8 765,137.6 771.2,141.9 776.7,146.4 781.3,151.3 785,156.4 787.7,161.6 789.5,167.1 790.3,172.6 790.1,178.1 789,183.6 786.8,189.1 783.7,194.4 779.7,199.6 774.8,204.5 769,209.2Z" fill="url(#d17)"/><path d="M761.5,212.3L754.3,216.2 746.6,219.8 738.2,222.9 729.3,225.6 720.1,227.8 710.5,229.5 700.7,230.7 690.8,231.3 680.8,231.4 670.9,231 661.2,230.1 651.7,228.6 642.5,226.6 633.8,224.1 625.6,221.2 617.9,217.8 611,214 604.7,209.9 599.3,205.4 594.7,200.6 591,195.6 588.3,190.3 586.4,185 585.6,179.5 585.8,174 586.9,168.6 589,163.2 592,157.9 596,152.8 600.9,147.9 606.6,143.2 613,138.9 620.2,135 628.1,131.4 636.5,128.3 645.4,125.6 654.7,123.4 664.3,121.7 674.2,120.5 684.2,119.9 694.2,119.8 704.1,120.2 713.9,121.2 723.4,122.7 732.5,124.7 741.2,127.2 749.4,130.2 757,133.6 763.9,137.4 770.1,141.6 775.5,146.1 780,150.9 783.7,155.9 786.4,161.1 788.1,166.5 788.9,171.9 788.8,177.4 787.6,182.8 785.5,188.2 782.4,193.4 778.5,198.5 773.6,203.4 767.9,208Z" fill="url(#d18)"/><path d="M760.5,211.1L753.4,215 745.7,218.5 737.5,221.6 728.8,224.3 719.6,226.4 710.2,228.1 700.5,229.3 690.7,229.9 680.9,230 671.1,229.6 661.5,228.7 652.2,227.2 643.1,225.3 634.5,222.8 626.4,219.9 618.9,216.6 612,212.8 605.9,208.7 600.5,204.3 596,199.6 592.3,194.6 589.6,189.5 587.8,184.2 587,178.8 587.1,173.4 588.3,168 590.3,162.7 593.3,157.5 597.3,152.4 602.1,147.6 607.7,143 614.1,138.8 621.2,134.9 628.9,131.4 637.2,128.3 646,125.6 655.2,123.4 664.7,121.8 674.4,120.6 684.2,120 694.1,119.9 703.9,120.4 713.5,121.3 722.9,122.8 731.9,124.8 740.5,127.3 748.6,130.2 756.1,133.5 762.9,137.3 769,141.4 774.3,145.9 778.8,150.6 782.4,155.5 785,160.7 786.8,165.9 787.5,171.3 787.4,176.7 786.2,182.1 784.1,187.4 781.1,192.6 777.2,197.6 772.4,202.4 766.8,206.9Z" fill="url(#d19)"/><path d="M760,210.7L753,214.6 745.3,218 737.2,221.1 728.5,223.7 719.4,225.9 710,227.5 700.4,228.7 690.7,229.3 681,229.5 671.3,229 661.7,228.1 652.4,226.7 643.4,224.7 634.9,222.3 626.8,219.4 619.4,216.1 612.5,212.4 606.4,208.3 601.1,203.9 596.6,199.2 593,194.3 590.3,189.2 588.5,184 587.7,178.6 587.8,173.3 589,167.9 591,162.6 594,157.4 597.9,152.4 602.7,147.6 608.2,143.1 614.6,138.8 621.6,135 629.3,131.5 637.5,128.4 646.3,125.8 655.4,123.6 664.8,122 674.5,120.8 684.2,120.2 694,120.1 703.7,120.6 713.3,121.5 722.6,123 731.6,125 740.1,127.4 748.2,130.3 755.6,133.7 762.4,137.4 768.4,141.5 773.7,145.9 778.1,150.6 781.7,155.5 784.4,160.6 786.1,165.8 786.9,171.1 786.7,176.5 785.5,181.8 783.5,187.1 780.5,192.3 776.6,197.2 771.8,202 766.3,206.5Z" fill="url(#d20)"/><path d="M759.5,210.4L752.5,214.2 744.9,217.7 736.8,220.7 728.2,223.3 719.2,225.5 709.9,227.1 700.4,228.3 690.7,228.9 681,229 671.4,228.6 661.9,227.7 652.6,226.2 643.7,224.3 635.2,221.9 627.2,219 619.8,215.8 613.1,212.1 607,208 601.7,203.7 597.3,199 593.7,194.1 591,189.1 589.2,183.8 588.4,178.5 588.5,173.2 589.6,167.9 591.7,162.6 594.7,157.5 598.5,152.5 603.2,147.7 608.8,143.2 615.1,139 622.1,135.2 629.7,131.7 637.9,128.7 646.6,126.1 655.6,123.9 665,122.3 674.6,121.1 684.3,120.5 694,120.4 703.6,120.9 713.1,121.8 722.4,123.3 731.3,125.2 739.8,127.7 747.7,130.6 755.1,133.9 761.8,137.6 767.9,141.6 773.1,146 777.5,150.7 781,155.5 783.7,160.6 785.4,165.8 786.2,171.1 786,176.4 784.9,181.7 782.8,186.9 779.8,192.1 776,197 771.3,201.7 765.7,206.2Z" fill="url(#d21)"/><path d="M756.6,208.9L749.9,212.5 742.6,215.8 734.8,218.8 726.6,221.3 717.9,223.3 709,224.9 699.8,226 690.6,226.6 681.3,226.7 672,226.3 662.9,225.4 654,224.1 645.5,222.2 637.3,219.9 629.7,217.1 622.6,214 616.1,210.5 610.2,206.6 605.2,202.4 600.9,197.9 597.4,193.2 594.9,188.4 593.2,183.4 592.4,178.3 592.5,173.1 593.6,168 595.5,163 598.4,158 602.1,153.3 606.6,148.7 612,144.4 618,140.4 624.7,136.7 632,133.3 639.9,130.4 648.2,127.9 656.9,125.9 665.9,124.3 675.1,123.2 684.4,122.6 693.7,122.5 703,122.9 712.1,123.8 721,125.2 729.5,127.1 737.7,129.4 745.3,132.2 752.4,135.4 758.9,139 764.6,142.8 769.7,147.1 773.9,151.5 777.3,156.2 779.8,161.1 781.5,166.1 782.2,171.1 782,176.2 781,181.3 779,186.3 776.1,191.3 772.4,196 767.9,200.5 762.6,204.8Z" fill="url(#d22)"/><path d="M753.7,207.3L747.3,210.8 740.3,214 732.8,216.8 724.9,219.2 716.6,221.2 708.1,222.7 699.3,223.7 690.4,224.3 681.5,224.4 672.7,224 663.9,223.2 655.4,221.9 647.3,220.1 639.4,217.9 632.1,215.3 625.3,212.2 619,208.8 613.5,205.1 608.6,201.1 604.5,196.8 601.2,192.3 598.7,187.7 597.1,182.9 596.4,178 596.5,173.1 597.5,168.2 599.4,163.4 602.1,158.6 605.7,154.1 610,149.7 615.1,145.5 620.9,141.7 627.4,138.1 634.4,135 641.9,132.1 649.9,129.8 658.2,127.8 666.8,126.3 675.6,125.2 684.5,124.7 693.5,124.6 702.3,125 711.1,125.9 719.6,127.2 727.8,129 735.6,131.2 742.9,133.9 749.7,136.9 755.9,140.3 761.4,144.1 766.2,148.1 770.3,152.4 773.5,156.9 776,161.5 777.5,166.3 778.2,171.2 778.1,176.1 777.1,180.9 775.2,185.7 772.4,190.4 768.9,195 764.5,199.4 759.5,203.5Z" fill="url(#d23)"/><path d="M750.8,205.3L744.7,208.6 738,211.7 730.9,214.3 723.3,216.6 715.4,218.5 707.2,220 698.8,221 690.3,221.5 681.8,221.6 673.3,221.3 665,220.4 656.8,219.2 649,217.5 641.5,215.4 634.5,212.9 628,210 622,206.7 616.7,203.2 612.1,199.3 608.1,195.2 605,190.9 602.6,186.5 601.1,181.9 600.4,177.2 600.5,172.5 601.5,167.9 603.3,163.2 605.9,158.7 609.3,154.3 613.4,150.1 618.3,146.2 623.8,142.5 630,139.1 636.7,136.1 643.9,133.4 651.5,131.1 659.5,129.2 667.7,127.8 676.1,126.8 684.6,126.2 693.2,126.1 701.7,126.5 710,127.4 718.2,128.6 726,130.4 733.4,132.5 740.5,135 747,137.9 752.9,141.2 758.2,144.8 762.8,148.6 766.7,152.7 769.8,157 772.1,161.5 773.6,166 774.3,170.7 774.1,175.4 773.1,180 771.3,184.6 768.7,189.1 765.3,193.5 761.2,197.6 756.3,201.6Z" fill="url(#d24)"/><path d="M747.9,201.6L742.1,204.9 735.7,207.8 728.9,210.3 721.7,212.5 714.1,214.3 706.3,215.7 698.3,216.6 690.2,217.2 682,217.3 674,216.9 666,216.1 658.2,214.9 650.8,213.3 643.6,211.3 636.9,208.9 630.7,206.1 625,203 619.9,199.6 615.5,196 611.8,192.1 608.8,188 606.5,183.7 605,179.3 604.4,174.9 604.5,170.4 605.4,165.9 607.1,161.5 609.6,157.2 612.9,153 616.8,149 621.5,145.3 626.8,141.7 632.6,138.5 639,135.6 645.9,133 653.2,130.9 660.8,129.1 668.6,127.7 676.6,126.7 684.8,126.2 692.9,126.1 701,126.5 709,127.3 716.8,128.5 724.2,130.2 731.3,132.2 738,134.6 744.2,137.4 749.9,140.5 754.9,143.9 759.3,147.6 763,151.5 766,155.6 768.2,159.8 769.7,164.2 770.3,168.6 770.2,173.1 769.2,177.6 767.5,182 765,186.2 761.8,190.4 757.8,194.4 753.2,198.1Z" fill="url(#d25)"/><path d="M747.4,200.6L741.6,203.7 735.3,206.6 728.5,209.2 721.4,211.3 713.9,213.1 706.1,214.5 698.2,215.4 690.2,216 682.1,216 674.1,215.7 666.2,214.9 658.5,213.7 651.1,212.1 644,210.1 637.4,207.7 631.2,205 625.6,201.9 620.5,198.6 616.1,194.9 612.4,191.1 609.4,187 607.2,182.8 605.7,178.4 605.1,174 605.2,169.6 606.1,165.2 607.8,160.8 610.3,156.5 613.5,152.4 617.4,148.4 622,144.7 627.3,141.2 633.1,138 639.4,135.1 646.2,132.5 653.4,130.4 661,128.6 668.8,127.2 676.7,126.3 684.8,125.8 692.9,125.7 700.9,126.1 708.8,126.8 716.5,128.1 723.9,129.7 731,131.7 737.6,134.1 743.8,136.9 749.4,139.9 754.4,143.3 758.7,147 762.4,150.8 765.4,154.9 767.6,159.1 769,163.4 769.6,167.8 769.5,172.3 768.5,176.7 766.8,181 764.4,185.3 761.2,189.4 757.2,193.4 752.6,197.1Z" fill="url(#d26)"/><path d="M746.9,199.2L741.2,202.4 734.9,205.2 728.2,207.8 721.1,209.9 713.7,211.7 706,213 698.1,214 690.1,214.5 682.1,214.6 674.2,214.2 666.4,213.5 658.7,212.3 651.4,210.7 644.4,208.7 637.8,206.4 631.7,203.6 626.1,200.6 621.1,197.3 616.7,193.6 613,189.8 610.1,185.8 607.9,181.6 606.4,177.3 605.8,172.9 605.9,168.5 606.8,164.1 608.5,159.8 610.9,155.5 614.1,151.4 618,147.5 622.6,143.8 627.8,140.3 633.5,137.2 639.8,134.3 646.6,131.8 653.7,129.6 661.2,127.9 668.9,126.5 676.8,125.6 684.8,125.1 692.8,125 700.8,125.4 708.6,126.1 716.3,127.3 723.6,129 730.6,131 737.2,133.3 743.3,136.1 748.8,139.1 753.8,142.5 758.1,146.1 761.8,149.9 764.7,154 766.9,158.1 768.3,162.4 768.9,166.8 768.8,171.2 767.9,175.6 766.2,179.9 763.7,184.1 760.5,188.2 756.6,192.1 752.1,195.8Z" fill="url(#d27)"/><path d="M746.4,197.4L740.7,200.5 734.5,203.4 727.9,205.9 720.8,208 713.4,209.7 705.8,211.1 698,212 690.1,212.5 682.2,212.6 674.3,212.3 666.5,211.5 659,210.4 651.7,208.8 644.7,206.8 638.2,204.5 632.1,201.8 626.6,198.8 621.6,195.5 617.3,191.9 613.7,188.1 610.7,184.1 608.6,179.9 607.1,175.7 606.5,171.3 606.6,167 607.5,162.6 609.1,158.3 611.6,154.1 614.7,150 618.6,146.1 623.1,142.5 628.3,139 634,135.9 640.2,133 646.9,130.5 654,128.4 661.4,126.7 669.1,125.3 676.9,124.4 684.8,123.9 692.8,123.8 700.7,124.2 708.5,124.9 716,126.1 723.3,127.7 730.2,129.7 736.8,132.1 742.8,134.8 748.3,137.8 753.2,141.1 757.5,144.7 761.1,148.5 764,152.5 766.2,156.7 767.6,160.9 768.2,165.2 768.1,169.6 767.2,173.9 765.5,178.2 763.1,182.4 759.9,186.5 756.1,190.3 751.5,194Z" fill="url(#d28)"/><path d="M745.9,194.3L740.3,197.4 734.1,200.2 727.5,202.6 720.5,204.7 713.2,206.5 705.7,207.8 697.9,208.7 690.1,209.3 682.2,209.3 674.4,209 666.7,208.3 659.2,207.1 652,205.5 645.1,203.6 638.6,201.3 632.6,198.6 627.1,195.6 622.2,192.3 617.9,188.8 614.3,185 611.4,181 609.2,176.9 607.8,172.7 607.2,168.4 607.3,164.1 608.2,159.8 609.8,155.5 612.2,151.3 615.4,147.3 619.2,143.4 623.7,139.8 628.8,136.4 634.5,133.3 640.7,130.4 647.3,128 654.3,125.9 661.6,124.1 669.2,122.8 677,121.9 684.9,121.4 692.7,121.3 700.6,121.6 708.3,122.4 715.8,123.6 723,125.2 729.9,127.1 736.3,129.5 742.3,132.2 747.8,135.2 752.7,138.5 756.9,142 760.5,145.8 763.4,149.8 765.5,153.9 766.9,158.1 767.5,162.4 767.4,166.7 766.5,171 764.8,175.2 762.4,179.4 759.3,183.4 755.5,187.2 751,190.9Z" fill="url(#d29)"/><path d="M745.4,190.2L739.8,193.3 733.7,196.1 727.2,198.5 720.2,200.6 713,202.3 705.5,203.6 697.8,204.6 690.1,205.1 682.3,205.2 674.5,204.8 666.9,204.1 659.5,202.9 652.3,201.4 645.5,199.4 639.1,197.1 633.1,194.5 627.6,191.5 622.8,188.3 618.5,184.8 615,181 612.1,177.1 609.9,173 608.5,168.8 607.8,164.6 608,160.3 608.9,156 610.5,151.8 612.9,147.6 616,143.6 619.8,139.8 624.2,136.2 629.3,132.8 634.9,129.7 641.1,126.9 647.6,124.5 654.6,122.4 661.9,120.7 669.4,119.4 677.1,118.4 684.9,117.9 692.7,117.9 700.5,118.2 708.1,119 715.5,120.1 722.7,121.7 729.5,123.7 735.9,126 741.9,128.7 747.3,131.6 752.1,134.9 756.3,138.4 759.9,142.2 762.7,146.1 764.8,150.1 766.2,154.3 766.9,158.6 766.7,162.9 765.8,167.1 764.2,171.3 761.8,175.4 758.7,179.4 754.9,183.2 750.4,186.8Z" fill="url(#d30)"/><path d="M744.9,187.4L739.3,190.5 733.3,193.2 726.8,195.6 719.9,197.7 712.8,199.4 705.3,200.7 697.7,201.6 690,202.2 682.3,202.2 674.6,201.9 667.1,201.2 659.7,200 652.6,198.5 645.8,196.6 639.5,194.3 633.6,191.7 628.2,188.7 623.3,185.5 619.1,182 615.6,178.3 612.7,174.4 610.6,170.4 609.2,166.2 608.5,162 608.7,157.7 609.5,153.5 611.2,149.3 613.5,145.2 616.6,141.3 620.4,137.5 624.8,133.9 629.8,130.5 635.4,127.5 641.5,124.7 648,122.3 654.9,120.2 662.1,118.5 669.6,117.2 677.2,116.3 684.9,115.8 692.7,115.7 700.3,116.1 707.9,116.8 715.3,118 722.4,119.5 729.1,121.5 735.5,123.8 741.4,126.4 746.8,129.4 751.5,132.6 755.7,136.1 759.2,139.8 762.1,143.7 764.2,147.7 765.5,151.9 766.2,156.1 766,160.3 765.1,164.5 763.5,168.7 761.1,172.8 758,176.7 754.3,180.5 749.9,184.1Z" fill="url(#d31)"/><path d="M744.4,186.2L738.9,189.2 732.9,191.9 726.5,194.3 719.7,196.4 712.5,198.1 705.2,199.4 697.7,200.3 690,200.8 682.4,200.9 674.7,200.5 667.3,199.8 660,198.7 652.9,197.1 646.2,195.2 639.9,193 634,190.4 628.7,187.5 623.9,184.3 619.7,180.8 616.2,177.1 613.4,173.3 611.3,169.3 609.9,165.2 609.2,161 609.4,156.8 610.2,152.5 611.8,148.4 614.2,144.3 617.2,140.4 621,136.6 625.4,133.1 630.3,129.8 635.8,126.7 641.9,124 648.3,121.6 655.2,119.5 662.3,117.8 669.7,116.5 677.3,115.7 684.9,115.2 692.6,115.1 700.2,115.4 707.7,116.2 715,117.3 722.1,118.9 728.8,120.8 735.1,123.1 740.9,125.7 746.2,128.6 751,131.8 755.1,135.3 758.6,138.9 761.4,142.8 763.5,146.8 764.9,150.9 765.5,155.1 765.3,159.3 764.4,163.5 762.8,167.6 760.5,171.7 757.4,175.6 753.7,179.3 749.3,182.9Z" fill="url(#d32)"/><path d="M743.9,185.4L738.4,188.4 732.5,191.1 726.1,193.5 719.4,195.5 712.3,197.2 705,198.5 697.6,199.4 690,199.9 682.4,199.9 674.9,199.6 667.4,198.9 660.2,197.8 653.2,196.3 646.6,194.4 640.3,192.1 634.5,189.6 629.2,186.7 624.5,183.5 620.3,180.1 616.9,176.4 614.1,172.6 611.9,168.6 610.6,164.6 609.9,160.4 610.1,156.2 610.9,152.1 612.5,148 614.8,143.9 617.9,140 621.6,136.3 625.9,132.8 630.8,129.5 636.3,126.5 642.3,123.8 648.7,121.4 655.5,119.3 662.5,117.7 669.9,116.4 677.4,115.5 685,115 692.6,114.9 700.1,115.3 707.6,116 714.8,117.2 721.8,118.7 728.4,120.6 734.6,122.9 740.4,125.4 745.7,128.3 750.4,131.5 754.5,134.9 758,138.6 760.7,142.4 762.8,146.4 764.2,150.5 764.8,154.6 764.6,158.8 763.8,162.9 762.2,167 759.8,171 756.8,174.9 753.1,178.6 748.8,182.1Z" fill="url(#d33)"/><path d="M743.4,184.7L738,187.6 732.1,190.3 725.8,192.7 719.1,194.7 712.1,196.4 704.9,197.6 697.5,198.5 690,199 682.5,199.1 675,198.8 667.6,198.1 660.4,197 653.5,195.5 646.9,193.6 640.7,191.4 635,188.8 629.7,185.9 625,182.8 621,179.4 617.5,175.8 614.7,172 612.6,168.1 611.3,164 610.6,159.9 610.8,155.8 611.6,151.7 613.2,147.6 615.5,143.6 618.5,139.7 622.2,136 626.5,132.5 631.3,129.3 636.8,126.3 642.7,123.6 649,121.3 655.7,119.2 662.8,117.6 670,116.3 677.5,115.4 685,114.9 692.5,114.9 700,115.2 707.4,115.9 714.5,117.1 721.5,118.6 728,120.5 734.2,122.7 740,125.3 745.2,128.1 749.8,131.3 753.9,134.7 757.3,138.3 760.1,142.1 762.1,146 763.5,150.1 764.1,154.2 763.9,158.3 763.1,162.4 761.5,166.5 759.2,170.4 756.2,174.3 752.5,178 748.2,181.4Z" fill="url(#d34)"/><path d="M742.9,184L737.5,187 731.7,189.6 725.4,192 718.8,194 711.9,195.6 704.7,196.9 697.4,197.8 690,198.3 682.5,198.3 675.1,198 667.8,197.3 660.7,196.2 653.8,194.7 647.3,192.9 641.2,190.7 635.5,188.1 630.3,185.3 625.6,182.2 621.6,178.8 618.1,175.3 615.4,171.5 613.3,167.6 612,163.6 611.3,159.5 611.5,155.4 612.3,151.3 613.9,147.3 616.2,143.3 619.1,139.5 622.8,135.9 627,132.4 631.9,129.2 637.2,126.2 643.1,123.5 649.4,121.2 656,119.2 663,117.6 670.2,116.3 677.5,115.4 685,114.9 692.5,114.9 699.9,115.2 707.2,115.9 714.3,117 721.1,118.6 727.7,120.4 733.8,122.6 739.5,125.2 744.7,128 749.3,131.2 753.3,134.5 756.7,138.1 759.4,141.8 761.5,145.7 762.8,149.7 763.4,153.8 763.3,157.9 762.4,162 760.8,166 758.5,169.9 755.6,173.7 751.9,177.4 747.7,180.8Z" fill="url(#d35)"/><path d="M742.4,183.6L737.1,186.5 731.3,189.1 725.1,191.4 718.5,193.4 711.7,195 704.6,196.3 697.3,197.2 689.9,197.6 682.5,197.7 675.2,197.4 668,196.7 660.9,195.6 654.2,194.1 647.7,192.3 641.6,190.1 635.9,187.6 630.8,184.8 626.2,181.7 622.2,178.4 618.8,174.9 616,171.1 614,167.3 612.7,163.3 612,159.3 612.1,155.2 613,151.1 614.5,147.1 616.8,143.2 619.8,139.4 623.4,135.8 627.6,132.4 632.4,129.2 637.7,126.3 643.5,123.6 649.7,121.3 656.3,119.3 663.2,117.7 670.3,116.4 677.6,115.6 685,115.1 692.4,115 699.8,115.3 707,116.1 714.1,117.2 720.8,118.7 727.3,120.5 733.4,122.7 739,125.2 744.1,128.1 748.7,131.1 752.7,134.5 756.1,138 758.8,141.7 760.8,145.6 762.1,149.6 762.7,153.6 762.6,157.6 761.7,161.7 760.1,165.7 757.9,169.6 754.9,173.4 751.3,177 747.1,180.4Z" fill="url(#d36)"/><path d="M741.4,182.8L736.1,185.7 730.5,188.3 724.4,190.5 717.9,192.5 711.2,194.1 704.2,195.3 697.1,196.2 689.9,196.7 682.6,196.7 675.4,196.4 668.3,195.7 661.4,194.7 654.8,193.2 648.4,191.4 642.4,189.3 636.9,186.8 631.8,184.1 627.3,181 623.4,177.8 620,174.3 617.4,170.6 615.3,166.8 614,162.9 613.4,159 613.5,155 614.4,151 615.9,147.1 618.1,143.2 621,139.5 624.5,136 628.7,132.6 633.4,129.5 638.6,126.6 644.3,124 650.4,121.7 656.9,119.8 663.7,118.2 670.7,116.9 677.8,116.1 685.1,115.6 692.3,115.6 699.6,115.9 706.7,116.6 713.6,117.7 720.2,119.1 726.6,120.9 732.5,123.1 738.1,125.6 743.1,128.3 747.6,131.4 751.5,134.7 754.8,138.1 757.5,141.8 759.4,145.6 760.7,149.5 761.3,153.4 761.2,157.4 760.3,161.4 758.8,165.3 756.6,169.1 753.7,172.8 750.2,176.3 746,179.7Z" fill="url(#d37)"/><path d="M738.5,180.8L733.5,183.6 728.2,186 722.4,188.2 716.3,190 709.9,191.5 703.3,192.7 696.6,193.5 689.8,193.9 682.9,194 676.1,193.7 669.4,193.1 662.8,192.1 656.5,190.7 650.5,189 644.9,187 639.6,184.6 634.8,182 630.5,179.1 626.8,176.1 623.7,172.8 621.1,169.3 619.2,165.7 618,162 617.4,158.3 617.5,154.5 618.3,150.7 619.8,147 621.9,143.4 624.6,139.9 627.9,136.5 631.8,133.3 636.3,130.4 641.2,127.6 646.6,125.2 652.4,123 658.5,121.2 665,119.7 671.6,118.5 678.3,117.7 685.2,117.3 692.1,117.2 698.9,117.5 705.6,118.2 712.2,119.2 718.5,120.6 724.5,122.3 730.1,124.3 735.3,126.7 740.1,129.3 744.4,132.2 748.1,135.3 751.2,138.6 753.7,142 755.6,145.6 756.8,149.3 757.3,153 757.2,156.8 756.4,160.5 755,164.2 752.9,167.9 750.1,171.4 746.8,174.7 742.9,177.9Z" fill="url(#d38)"/><path d="M737.5,180.3L732.6,182.9 727.4,185.3 721.7,187.4 715.7,189.2 709.5,190.7 703,191.9 696.4,192.6 689.7,193.1 683,193.2 676.3,192.9 669.7,192.2 663.3,191.2 657.1,189.9 651.3,188.2 645.7,186.2 640.6,184 635.9,181.4 631.7,178.6 628,175.6 624.9,172.3 622.4,169 620.6,165.4 619.4,161.8 618.8,158.1 618.9,154.4 619.7,150.8 621.1,147.1 623.2,143.5 625.8,140.1 629.1,136.8 633,133.7 637.3,130.8 642.2,128.1 647.5,125.7 653.1,123.6 659.1,121.8 665.4,120.3 671.9,119.2 678.5,118.4 685.2,117.9 692,117.9 698.7,118.2 705.3,118.8 711.7,119.8 717.8,121.2 723.7,122.9 729.3,124.9 734.4,127.2 739.1,129.7 743.2,132.6 746.9,135.6 749.9,138.8 752.4,142.2 754.2,145.7 755.4,149.3 756,153 755.8,156.7 755.1,160.4 753.6,164 751.6,167.5 748.9,171 745.6,174.3 741.8,177.4Z" fill="url(#d39)"/><path d="M734.6,178.6L730,181.2 725.1,183.4 719.7,185.4 714.1,187.1 708.2,188.5 702.1,189.6 695.9,190.3 689.6,190.7 683.2,190.8 677,190.5 670.8,189.9 664.7,189 658.9,187.7 653.4,186.1 648.1,184.3 643.3,182.1 638.9,179.7 634.9,177.1 631.5,174.2 628.6,171.2 626.2,168 624.5,164.7 623.3,161.3 622.8,157.8 622.9,154.3 623.6,150.8 625,147.4 626.9,144.1 629.4,140.8 632.5,137.7 636.1,134.8 640.2,132 644.8,129.5 649.8,127.2 655.1,125.3 660.8,123.6 666.7,122.2 672.8,121.1 679,120.3 685.4,119.9 691.7,119.9 698,120.2 704.2,120.8 710.3,121.7 716.1,123 721.6,124.6 726.8,126.5 731.7,128.6 736.1,131.1 740,133.7 743.4,136.6 746.3,139.6 748.6,142.8 750.4,146.1 751.5,149.5 752,153 751.9,156.4 751.1,159.9 749.8,163.3 747.9,166.7 745.3,169.9 742.3,173 738.7,175.9Z" fill="url(#d40)"/><path d="M731.7,177L727.4,179.4 722.7,181.5 717.7,183.4 712.5,185 706.9,186.3 701.2,187.3 695.4,188 689.5,188.4 683.5,188.4 677.6,188.2 671.8,187.6 666.1,186.7 660.7,185.6 655.5,184.1 650.6,182.3 646,180.3 641.9,178 638.2,175.6 634.9,172.9 632.2,170 630,167 628.4,163.9 627.3,160.7 626.8,157.5 626.9,154.2 627.6,150.9 628.8,147.7 630.6,144.6 633,141.5 635.9,138.6 639.3,135.9 643.1,133.3 647.4,130.9 652.1,128.8 657.1,126.9 662.4,125.3 668,124 673.7,123 679.6,122.3 685.5,121.9 691.5,121.9 697.4,122.1 703.2,122.7 708.9,123.6 714.3,124.8 719.5,126.3 724.4,128.1 728.9,130.1 733.1,132.4 736.8,134.9 740,137.5 742.7,140.4 744.9,143.4 746.5,146.5 747.5,149.7 748,152.9 747.9,156.2 747.2,159.4 746,162.6 744.2,165.8 741.8,168.8 738.9,171.7 735.5,174.5Z" fill="url(#d41)"/><path d="M728.8,175.4L724.8,177.6 720.4,179.6 715.8,181.3 710.8,182.8 705.7,184.1 700.3,185 694.9,185.7 689.3,186 683.8,186.1 678.2,185.8 672.8,185.3 667.5,184.5 662.4,183.4 657.5,182 653,180.4 648.7,178.5 644.9,176.4 641.4,174 638.4,171.5 635.8,168.9 633.8,166.1 632.2,163.2 631.2,160.2 630.8,157.1 630.9,154.1 631.5,151 632.7,148 634.4,145.1 636.6,142.2 639.3,139.5 642.5,136.9 646.1,134.5 650.1,132.3 654.4,130.3 659.1,128.6 664.1,127.1 669.2,125.9 674.6,124.9 680.1,124.3 685.6,123.9 691.2,123.9 696.7,124.1 702.2,124.7 707.5,125.5 712.6,126.6 717.4,128 722,129.7 726.2,131.6 730.1,133.7 733.5,136 736.5,138.5 739.1,141.2 741.1,144 742.6,146.9 743.6,149.9 744.1,152.9 744,155.9 743.3,159 742.1,162 740.4,164.9 738.2,167.7 735.5,170.5 732.4,173Z" fill="url(#d42)"/><path d="M725.9,173.8L722.2,175.8 718.1,177.7 713.8,179.3 709.2,180.7 704.4,181.8 699.4,182.7 694.3,183.3 689.2,183.7 684,183.7 678.9,183.5 673.8,183 668.9,182.2 664.2,181.2 659.6,179.9 655.4,178.4 651.4,176.6 647.8,174.7 644.6,172.5 641.8,170.2 639.4,167.7 637.5,165.1 636.1,162.4 635.2,159.6 634.8,156.8 634.8,154 635.4,151.1 636.5,148.3 638.1,145.6 640.2,143 642.7,140.4 645.6,138 649,135.8 652.7,133.7 656.7,131.9 661.1,130.3 665.7,128.9 670.5,127.7 675.5,126.9 680.6,126.3 685.8,125.9 690.9,125.9 696.1,126.1 701.1,126.6 706.1,127.4 710.8,128.4 715.3,129.7 719.6,131.3 723.5,133 727.1,135 730.3,137.2 733.1,139.5 735.5,142 737.3,144.6 738.8,147.3 739.7,150 740.1,152.8 740,155.7 739.4,158.5 738.3,161.3 736.7,164 734.7,166.7 732.2,169.2 729.2,171.6Z" fill="url(#d43)"/><path d="M723,172.2L719.6,174.1 715.8,175.8 711.8,177.3 707.6,178.6 703.1,179.6 698.5,180.4 693.8,181 689.1,181.3 684.3,181.3 679.5,181.1 674.9,180.7 670.3,180 665.9,179 661.7,177.8 657.8,176.4 654.2,174.8 650.8,173 647.9,171 645.3,168.8 643.1,166.5 641.3,164.1 640,161.6 639.1,159.1 638.7,156.5 638.8,153.8 639.4,151.2 640.4,148.6 641.8,146.1 643.7,143.7 646.1,141.3 648.8,139.1 651.9,137 655.3,135.1 659.1,133.4 663.1,131.9 667.4,130.7 671.8,129.6 676.4,128.8 681.1,128.2 685.9,127.9 690.7,127.9 695.4,128.1 700.1,128.5 704.7,129.3 709,130.2 713.2,131.4 717.1,132.8 720.8,134.5 724.1,136.3 727.1,138.3 729.7,140.4 731.8,142.7 733.6,145.1 734.9,147.6 735.7,150.2 736.1,152.8 736,155.4 735.5,158 734.5,160.6 733,163.1 731.1,165.6 728.8,167.9 726.1,170.1Z" fill="url(#d44)"/><path d="M722.5,171.8L719.1,173.7 715.4,175.4 711.5,176.9 707.3,178.1 702.9,179.2 698.4,180 693.7,180.5 689,180.8 684.3,180.9 679.7,180.7 675,180.2 670.6,179.5 666.2,178.6 662.1,177.4 658.2,176 654.6,174.4 651.4,172.6 648.4,170.7 645.9,168.5 643.7,166.3 642,163.9 640.7,161.4 639.8,158.9 639.4,156.3 639.5,153.8 640,151.2 641,148.6 642.5,146.1 644.4,143.7 646.6,141.4 649.3,139.2 652.4,137.2 655.8,135.3 659.5,133.6 663.4,132.2 667.6,130.9 672,129.9 676.6,129.1 681.2,128.5 685.9,128.2 690.6,128.2 695.3,128.4 699.9,128.8 704.4,129.5 708.7,130.5 712.9,131.7 716.7,133.1 720.3,134.7 723.6,136.5 726.5,138.4 729.1,140.6 731.2,142.8 732.9,145.2 734.2,147.6 735.1,150.2 735.4,152.7 735.3,155.3 734.8,157.9 733.8,160.4 732.4,162.9 730.5,165.3 728.2,167.6 725.5,169.8Z" fill="url(#d45)"/><path d="M722,171.4L718.6,173.2 715,174.9 711.1,176.4 707,177.6 702.7,178.6 698.2,179.4 693.6,180 689,180.3 684.4,180.3 679.8,180.1 675.2,179.7 670.8,179 666.5,178.1 662.5,176.9 658.7,175.5 655.1,173.9 651.9,172.2 649,170.2 646.5,168.2 644.3,165.9 642.6,163.6 641.3,161.2 640.5,158.7 640.1,156.1 640.2,153.6 640.7,151 641.7,148.5 643.1,146.1 645,143.7 647.2,141.4 649.9,139.3 652.9,137.3 656.2,135.4 659.9,133.8 663.8,132.3 667.9,131.1 672.3,130 676.7,129.3 681.3,128.7 685.9,128.4 690.6,128.4 695.2,128.6 699.7,129 704.2,129.7 708.4,130.7 712.5,131.8 716.3,133.2 719.8,134.8 723.1,136.5 725.9,138.5 728.5,140.6 730.6,142.8 732.3,145.1 733.5,147.6 734.4,150.1 734.7,152.6 734.7,155.1 734.1,157.7 733.1,160.2 731.7,162.6 729.9,165 727.6,167.3 725,169.4Z" fill="url(#d46)"/><path d="M721,170.4L717.7,172.2 714.2,173.8 710.4,175.2 706.4,176.4 702.2,177.4 697.9,178.2 693.5,178.7 689,179 684.5,179 680,178.9 675.6,178.4 671.3,177.8 667.2,176.9 663.2,175.7 659.5,174.4 656.1,172.9 652.9,171.2 650.1,169.3 647.7,167.2 645.6,165.1 643.9,162.8 642.7,160.5 641.9,158 641.5,155.6 641.6,153.1 642.1,150.6 643.1,148.2 644.4,145.8 646.2,143.5 648.4,141.3 651,139.2 653.9,137.3 657.2,135.5 660.7,133.9 664.5,132.5 668.5,131.2 672.7,130.3 677,129.5 681.5,129 686,128.7 690.5,128.6 695,128.8 699.4,129.3 703.7,129.9 707.8,130.8 711.7,132 715.5,133.3 718.9,134.8 722,136.6 724.8,138.4 727.2,140.5 729.3,142.6 731,144.9 732.2,147.3 733,149.7 733.3,152.1 733.3,154.6 732.8,157.1 731.8,159.5 730.4,161.9 728.6,164.2 726.4,166.4 723.9,168.5Z" fill="url(#d47)"/><path d="M718.1,166.5L715.1,168.1 711.9,169.6 708.4,170.9 704.8,172 700.9,172.9 697,173.6 692.9,174.1 688.8,174.3 684.7,174.4 680.6,174.2 676.6,173.8 672.7,173.2 668.9,172.4 665.3,171.4 661.9,170.1 658.8,168.7 655.9,167.2 653.4,165.5 651.1,163.6 649.2,161.6 647.7,159.6 646.6,157.4 645.8,155.2 645.5,153 645.6,150.7 646,148.4 646.9,146.2 648.2,144 649.8,141.9 651.8,139.9 654.2,138 656.8,136.2 659.8,134.6 663,133.1 666.5,131.8 670.1,130.7 674,129.8 677.9,129.1 682,128.6 686.1,128.4 690.2,128.3 694.3,128.5 698.3,128.9 702.3,129.5 706,130.4 709.6,131.4 713,132.6 716.2,134 719,135.6 721.6,137.3 723.8,139.2 725.7,141.1 727.2,143.2 728.3,145.4 729,147.6 729.4,149.8 729.3,152.1 728.8,154.3 728,156.5 726.7,158.7 725.1,160.8 723.1,162.8 720.7,164.7Z" fill="url(#d48)"/><path d="M717.6,165.3L714.7,166.9 711.5,168.3 708.1,169.6 704.5,170.7 700.7,171.6 696.8,172.3 692.9,172.7 688.8,173 684.8,173 680.8,172.9 676.8,172.5 672.9,171.9 669.2,171.1 665.7,170.1 662.4,168.9 659.3,167.5 656.4,166 653.9,164.3 651.7,162.4 649.9,160.5 648.4,158.5 647.3,156.3 646.5,154.2 646.2,152 646.3,149.7 646.7,147.5 647.6,145.3 648.8,143.2 650.4,141.1 652.4,139.1 654.7,137.3 657.3,135.5 660.2,133.9 663.4,132.5 666.8,131.2 670.4,130.1 674.2,129.2 678.1,128.5 682.1,128.1 686.1,127.8 690.2,127.8 694.2,127.9 698.2,128.3 702,128.9 705.7,129.7 709.3,130.8 712.6,132 715.7,133.3 718.5,134.9 721,136.6 723.2,138.4 725,140.3 726.5,142.4 727.6,144.5 728.4,146.7 728.7,148.9 728.6,151.1 728.2,153.3 727.3,155.5 726.1,157.6 724.4,159.7 722.5,161.7 720.2,163.5Z" fill="url(#d49)"/><path d="M717.1,163.7L714.2,165.3 711.1,166.7 707.7,167.9 704.2,169 700.5,169.9 696.7,170.6 692.8,171 688.8,171.3 684.8,171.3 680.9,171.2 677,170.8 673.2,170.2 669.5,169.4 666.1,168.4 662.8,167.2 659.7,165.9 657,164.4 654.5,162.7 652.3,160.9 650.5,159 649,157 647.9,154.9 647.2,152.8 646.9,150.6 647,148.4 647.4,146.3 648.3,144.1 649.5,142 651.1,140 653,138 655.3,136.2 657.8,134.4 660.7,132.9 663.8,131.4 667.2,130.2 670.7,129.1 674.4,128.3 678.3,127.6 682.2,127.1 686.2,126.9 690.1,126.8 694.1,127 698,127.4 701.8,128 705.4,128.8 708.9,129.8 712.2,130.9 715.2,132.3 718,133.8 720.4,135.5 722.6,137.3 724.4,139.2 725.9,141.2 727,143.3 727.7,145.4 728,147.6 727.9,149.8 727.5,151.9 726.6,154.1 725.4,156.2 723.8,158.2 721.9,160.2 719.6,162Z" fill="url(#d50)"/><path d="M716.5,161.3L713.7,162.8 710.7,164.2 707.4,165.5 703.9,166.5 700.3,167.4 696.5,168 692.7,168.5 688.8,168.8 684.9,168.8 681,168.6 677.2,168.3 673.4,167.7 669.8,166.9 666.4,165.9 663.2,164.8 660.2,163.4 657.5,161.9 655.1,160.3 652.9,158.6 651.1,156.7 649.7,154.7 648.6,152.7 647.9,150.6 647.6,148.4 647.7,146.3 648.1,144.1 648.9,142 650.1,140 651.7,138 653.6,136 655.8,134.2 658.3,132.5 661.2,131 664.2,129.6 667.5,128.4 671,127.3 674.7,126.5 678.4,125.8 682.3,125.3 686.2,125.1 690.1,125 694,125.2 697.8,125.6 701.5,126.2 705.1,127 708.5,127.9 711.8,129.1 714.7,130.4 717.5,131.9 719.9,133.6 722,135.3 723.8,137.2 725.2,139.2 726.3,141.2 727,143.3 727.3,145.4 727.2,147.6 726.8,149.7 726,151.8 724.8,153.9 723.2,155.9 721.3,157.8 719.1,159.6Z" fill="url(#d51)"/><path d="M716,158.4L713.3,160 710.3,161.3 707,162.5 703.6,163.6 700.1,164.4 696.4,165.1 692.6,165.5 688.8,165.8 684.9,165.8 681.1,165.6 677.3,165.3 673.7,164.7 670.2,163.9 666.8,163 663.6,161.8 660.7,160.5 658,159.1 655.6,157.5 653.5,155.7 651.8,153.9 650.4,152 649.3,150 648.6,147.9 648.3,145.8 648.4,143.7 648.8,141.6 649.6,139.5 650.8,137.5 652.3,135.5 654.2,133.6 656.4,131.8 658.9,130.2 661.6,128.7 664.6,127.3 667.9,126.1 671.3,125.1 674.9,124.2 678.6,123.6 682.4,123.1 686.2,122.9 690,122.8 693.9,123 697.6,123.4 701.3,123.9 704.8,124.7 708.2,125.7 711.3,126.8 714.3,128.1 716.9,129.6 719.3,131.2 721.4,132.9 723.1,134.8 724.6,136.7 725.6,138.7 726.3,140.8 726.6,142.9 726.5,145 726.1,147.1 725.3,149.1 724.1,151.2 722.6,153.1 720.7,155 718.5,156.8Z" fill="url(#d52)"/><path d="M715.5,156.4L712.8,157.8 709.9,159.2 706.7,160.4 703.3,161.4 699.8,162.2 696.2,162.9 692.5,163.3 688.7,163.6 685,163.6 681.2,163.4 677.5,163.1 673.9,162.5 670.5,161.8 667.2,160.8 664.1,159.7 661.2,158.4 658.5,157 656.2,155.4 654.1,153.7 652.4,151.9 651,150 650,148 649.3,146 649,143.9 649,141.9 649.5,139.8 650.3,137.8 651.4,135.8 652.9,133.8 654.8,132 656.9,130.2 659.4,128.6 662.1,127.1 665,125.8 668.2,124.6 671.6,123.6 675.1,122.7 678.7,122.1 682.5,121.6 686.2,121.4 690,121.4 693.8,121.5 697.4,121.9 701,122.5 704.5,123.2 707.8,124.2 710.9,125.3 713.8,126.6 716.4,128 718.8,129.6 720.8,131.3 722.5,133.1 723.9,135 724.9,137 725.6,139 725.9,141 725.8,143.1 725.4,145.2 724.6,147.2 723.5,149.2 722,151.1 720.1,153 718,154.7Z" fill="url(#d53)"/><path d="M715,155.2L712.4,156.6 709.5,158 706.3,159.1 703.1,160.1 699.6,160.9 696,161.6 692.4,162 688.7,162.2 685,162.3 681.3,162.1 677.7,161.8 674.2,161.2 670.8,160.5 667.5,159.5 664.5,158.5 661.6,157.2 659.1,155.8 656.8,154.2 654.7,152.6 653,150.8 651.7,148.9 650.7,147 650,145 649.7,143 649.7,140.9 650.2,138.9 650.9,136.9 652.1,134.9 653.6,133 655.4,131.2 657.5,129.5 659.9,127.9 662.5,126.4 665.5,125.1 668.6,124 671.9,123 675.3,122.1 678.9,121.5 682.5,121.1 686.2,120.8 690,120.8 693.6,121 697.3,121.3 700.8,121.9 704.2,122.6 707.4,123.6 710.5,124.7 713.3,125.9 715.9,127.3 718.2,128.9 720.2,130.6 721.9,132.3 723.2,134.2 724.3,136.1 724.9,138.1 725.2,140.1 725.1,142.2 724.7,144.2 723.9,146.2 722.8,148.2 721.3,150 719.5,151.9 717.4,153.6Z" fill="url(#d54)"/><path d="M714.5,154.3L711.9,155.7 709.1,157 706,158.2 702.8,159.1 699.4,159.9 695.9,160.6 692.3,161 688.7,161.2 685,161.3 681.4,161.1 677.9,160.8 674.4,160.2 671.1,159.5 667.9,158.6 664.9,157.5 662.1,156.3 659.6,154.9 657.3,153.4 655.3,151.7 653.7,150 652.3,148.2 651.3,146.3 650.7,144.3 650.4,142.3 650.4,140.3 650.9,138.3 651.6,136.4 652.7,134.4 654.2,132.6 656,130.8 658,129.1 660.4,127.5 663,126.1 665.9,124.8 668.9,123.7 672.2,122.7 675.6,121.9 679.1,121.3 682.6,120.8 686.3,120.6 689.9,120.6 693.5,120.7 697.1,121.1 700.6,121.6 703.9,122.4 707.1,123.3 710.1,124.3 712.8,125.6 715.4,127 717.6,128.5 719.6,130.1 721.2,131.9 722.6,133.7 723.6,135.6 724.2,137.5 724.5,139.5 724.5,141.5 724,143.5 723.3,145.5 722.2,147.4 720.7,149.3 718.9,151 716.9,152.7Z" fill="url(#d55)"/><path d="M714,153.5L711.4,154.9 708.7,156.2 705.7,157.3 702.5,158.2 699.2,159 695.7,159.6 692.2,160 688.7,160.3 685.1,160.3 681.5,160.2 678.1,159.8 674.7,159.3 671.4,158.6 668.3,157.7 665.3,156.6 662.6,155.4 660.1,154.1 657.9,152.6 655.9,151 654.3,149.3 653,147.5 652,145.6 651.4,143.7 651.1,141.7 651.1,139.8 651.5,137.8 652.3,135.9 653.4,134 654.8,132.2 656.5,130.4 658.6,128.8 660.9,127.2 663.5,125.8 666.3,124.5 669.3,123.4 672.5,122.5 675.8,121.7 679.2,121.1 682.7,120.6 686.3,120.4 689.9,120.4 693.4,120.5 696.9,120.9 700.3,121.4 703.6,122.1 706.7,123 709.6,124.1 712.4,125.3 714.8,126.7 717.1,128.2 719,129.8 720.6,131.5 721.9,133.3 722.9,135.1 723.5,137.1 723.8,139 723.8,141 723.4,142.9 722.6,144.8 721.5,146.7 720.1,148.5 718.3,150.3 716.3,151.9Z" fill="url(#d56)"/><path d="M713.5,152.8L711,154.2 708.2,155.4 705.3,156.5 702.2,157.5 698.9,158.2 695.6,158.8 692.1,159.2 688.6,159.5 685.1,159.5 681.7,159.3 678.2,159 674.9,158.5 671.7,157.8 668.6,156.9 665.7,155.9 663.1,154.7 660.6,153.4 658.5,151.9 656.6,150.3 654.9,148.6 653.7,146.9 652.7,145.1 652.1,143.2 651.8,141.3 651.8,139.3 652.2,137.4 653,135.5 654,133.7 655.4,131.9 657.1,130.2 659.1,128.5 661.4,127 663.9,125.6 666.7,124.4 669.6,123.3 672.7,122.4 676,121.6 679.4,121 682.8,120.6 686.3,120.4 689.8,120.3 693.3,120.5 696.7,120.8 700.1,121.3 703.3,122 706.3,122.9 709.2,124 711.9,125.1 714.3,126.5 716.5,127.9 718.4,129.5 720,131.2 721.3,133 722.2,134.8 722.8,136.7 723.1,138.6 723.1,140.5 722.7,142.4 721.9,144.3 720.9,146.2 719.5,147.9 717.8,149.7 715.8,151.3Z" fill="url(#d57)"/><path d="M713,152.2L710.5,153.6 707.8,154.8 705,155.9 701.9,156.8 698.7,157.6 695.4,158.2 692,158.6 688.6,158.8 685.2,158.8 681.8,158.7 678.4,158.3 675.1,157.8 672,157.2 669,156.3 666.2,155.3 663.5,154.1 661.2,152.8 659,151.4 657.2,149.8 655.6,148.2 654.3,146.5 653.4,144.7 652.8,142.8 652.5,141 652.5,139.1 652.9,137.2 653.6,135.3 654.7,133.5 656.1,131.8 657.7,130.1 659.7,128.5 661.9,127 664.4,125.6 667.1,124.4 670,123.3 673,122.4 676.2,121.7 679.5,121.1 682.9,120.7 686.3,120.5 689.8,120.4 693.2,120.6 696.5,120.9 699.8,121.4 703,122.1 706,123 708.8,124 711.4,125.1 713.8,126.5 715.9,127.9 717.8,129.4 719.3,131.1 720.6,132.8 721.5,134.6 722.2,136.4 722.4,138.3 722.4,140.2 722,142.1 721.3,143.9 720.2,145.7 718.8,147.5 717.2,149.2 715.2,150.8Z" fill="url(#d58)"/><path d="M712,151.4L709.6,152.7 707,153.8 704.3,154.9 701.3,155.8 698.3,156.5 695.1,157 691.9,157.4 688.6,157.6 685.3,157.7 682,157.5 678.8,157.2 675.6,156.7 672.6,156.1 669.7,155.3 667,154.3 664.5,153.2 662.2,151.9 660.2,150.5 658.4,149 656.9,147.5 655.6,145.8 654.7,144.1 654.1,142.3 653.9,140.5 653.9,138.7 654.3,136.9 655,135.1 656,133.4 657.3,131.7 658.9,130.1 660.8,128.5 662.9,127.1 665.3,125.8 667.9,124.6 670.7,123.6 673.6,122.7 676.7,122 679.8,121.4 683.1,121 686.4,120.8 689.7,120.8 693,120.9 696.2,121.3 699.3,121.8 702.4,122.4 705.2,123.2 707.9,124.2 710.5,125.3 712.7,126.6 714.8,128 716.6,129.5 718.1,131 719.3,132.7 720.2,134.4 720.8,136.2 721,138 721,139.8 720.6,141.6 719.9,143.4 718.9,145.1 717.6,146.8 716,148.4 714.1,149.9Z" fill="url(#d59)"/><path d="M709.1,149L707,150.1 704.7,151.2 702.3,152.1 699.7,152.9 697,153.5 694.2,154 691.3,154.3 688.4,154.5 685.5,154.6 682.6,154.4 679.8,154.2 677,153.7 674.4,153.1 671.8,152.4 669.4,151.6 667.2,150.6 665.2,149.5 663.4,148.2 661.8,146.9 660.5,145.5 659.4,144.1 658.6,142.6 658.1,141 657.8,139.4 657.9,137.8 658.2,136.2 658.8,134.7 659.7,133.1 660.9,131.6 662.3,130.2 664,128.9 665.8,127.6 667.9,126.5 670.2,125.4 672.7,124.5 675.2,123.7 678,123.1 680.7,122.6 683.6,122.3 686.5,122.1 689.4,122 692.3,122.2 695.2,122.4 697.9,122.9 700.6,123.5 703.1,124.2 705.5,125.1 707.7,126 709.8,127.2 711.6,128.4 713.1,129.7 714.5,131.1 715.5,132.5 716.3,134 716.8,135.6 717.1,137.2 717,138.8 716.7,140.4 716.1,141.9 715.2,143.5 714,145 712.6,146.4 711,147.7Z" fill="url(#d60)"/><path d="M708.1,148.4L706.1,149.5 703.9,150.4 701.6,151.3 699.1,152.1 696.5,152.7 693.9,153.1 691.2,153.5 688.4,153.6 685.6,153.7 682.9,153.5 680.2,153.3 677.5,152.9 675,152.3 672.6,151.6 670.3,150.8 668.2,149.9 666.2,148.8 664.5,147.7 663,146.4 661.7,145.1 660.7,143.7 660,142.2 659.5,140.8 659.2,139.2 659.3,137.7 659.6,136.2 660.2,134.7 661,133.2 662.1,131.8 663.5,130.5 665.1,129.2 666.9,128 668.8,126.9 671,125.9 673.4,125 675.8,124.3 678.4,123.7 681.1,123.2 683.8,122.9 686.6,122.7 689.3,122.7 692.1,122.8 694.8,123.1 697.4,123.5 700,124 702.4,124.7 704.7,125.5 706.8,126.5 708.7,127.5 710.4,128.7 711.9,130 713.2,131.3 714.2,132.7 715,134.1 715.5,135.6 715.7,137.1 715.6,138.6 715.3,140.2 714.7,141.6 713.9,143.1 712.8,144.5 711.4,145.9 709.9,147.2Z" fill="url(#d61)"/><path d="M705.2,146.7L703.5,147.6 701.6,148.4 699.6,149.2 697.5,149.8 695.3,150.4 693,150.8 690.6,151 688.3,151.2 685.9,151.2 683.5,151.1 681.2,150.9 678.9,150.5 676.7,150.1 674.7,149.5 672.7,148.8 670.9,148 669.2,147 667.8,146.1 666.5,145 665.4,143.8 664.5,142.6 663.8,141.4 663.4,140.1 663.2,138.8 663.3,137.5 663.5,136.2 664,134.9 664.8,133.7 665.7,132.4 666.9,131.3 668.2,130.2 669.8,129.2 671.5,128.2 673.3,127.4 675.3,126.6 677.5,126 679.7,125.5 682,125 684.3,124.8 686.7,124.6 689.1,124.6 691.4,124.7 693.8,124.9 696,125.3 698.2,125.8 700.3,126.4 702.3,127.1 704.1,127.9 705.7,128.8 707.2,129.8 708.5,130.8 709.6,132 710.4,133.2 711.1,134.4 711.5,135.7 711.7,137 711.7,138.3 711.4,139.6 710.9,140.9 710.2,142.1 709.2,143.4 708.1,144.5 706.7,145.6Z" fill="url(#d62)"/></g><path d="M703.7,145.8L701.1,147.2 698.2,148.3 695,149.1 691.7,149.7 688.2,150 684.7,150 681.3,149.6 678,149 675,148.2 672.3,147 669.9,145.6 668,144.1 666.5,142.4 665.6,140.5 665.2,138.6 665.4,136.7 666.1,134.8 667.3,133 669,131.3 671.2,129.8 673.8,128.4 676.7,127.3 679.9,126.4 683.3,125.9 686.8,125.6 690.2,125.6 693.7,125.9 696.9,126.5 700,127.4 702.7,128.6 705.1,129.9 707,131.5 708.4,133.2 709.3,135.1 709.7,137 709.6,138.9 708.9,140.8 707.6,142.6 705.9,144.3 703.7,145.8Z" fill="url(#hg)"/><path d="M713.6,152.9L712.7,153.4 711.8,153.9 710.9,154.3 709.9,154.8 708.9,155.2 707.9,155.7 706.9,156.1 705.8,156.4 704.7,156.8 703.6,157.2 702.5,157.5 701.4,157.8 700.2,158.1 699,158.3 697.9,158.5 696.7,158.8 695.4,158.9 694.2,159.1 693,159.3 691.8,159.4 690.5,159.5 689.3,159.5 688,159.6 686.8,159.6 685.5,159.6 684.3,159.6 683,159.5 681.8,159.5 680.6,159.4 679.3,159.2 678.1,159.1 676.9,158.9 675.7,158.7 674.6,158.5 673.4,158.3 672.3,158 671.2,157.8 670.1,157.5 669,157.1 667.9,156.8 666.9,156.4 665.9,156.1 664.9,155.6 663.9,155.2 663,154.8 662.1,154.3 661.2,153.9 660.4,153.4 659.6,152.8 658.8,152.3 658.1,151.8 657.4,151.2 656.7,150.7 656.1,150.1 655.5,149.5 655,148.9 654.5,148.3 654,147.6 653.6,147 653.2,146.3 652.9,145.7 652.6,145 652.3,144.4 652.1,143.7 651.9,143 651.8,142.3 651.7,141.7 651.7,141 651.7,140.3 651.7,139.6 651.8,138.9 651.9,138.2 652.1,137.6 652.3,136.9 652.6,136.2 652.9,135.5 653.2,134.9 653.6,134.2 654.1,133.5 654.5,132.9 655,132.3 655.6,131.6 656.2,131 656.8,130.4 657.5,129.8 658.2,129.2 658.9,128.7 659.7,128.1 660.5,127.6 661.3,127 662.2,126.5 663.1,126 664,125.6 665,125.1 666,124.7 667,124.2 668,123.8 669.1,123.5 670.2,123.1 671.3,122.8 672.4,122.4 673.6,122.1 674.7,121.9 675.9,121.6 677.1,121.4 678.3,121.2 679.5,121 680.7,120.8 682,120.7 683.2,120.5 684.4,120.5 685.7,120.4 686.9,120.3 688.2,120.3 689.4,120.3 690.7,120.3 691.9,120.4 693.2,120.5 694.4,120.6 695.6,120.7 696.8,120.8 698,121 699.2,121.2 700.4,121.4 701.5,121.6 702.7,121.9 703.8,122.2 704.9,122.5 706,122.8 707,123.1 708.1,123.5 709.1,123.9 710.1,124.3 711,124.7 712,125.2 712.8,125.6 713.7,126.1 714.5,126.6 715.3,127.1 716.1,127.6 716.8,128.2 717.5,128.7 718.2,129.3 718.8,129.9 719.4,130.5 719.9,131.1 720.4,131.7 720.9,132.3 721.3,133 721.7,133.6 722.1,134.3 722.4,134.9 722.6,135.6 722.8,136.2 723,136.9 723.1,137.6 723.2,138.3 723.2,139 723.2,139.7 723.2,140.3 723.1,141 723,141.7 722.8,142.4 722.6,143.1 722.3,143.7 722,144.4 721.7,145.1 721.3,145.7 720.8,146.4 720.4,147 719.9,147.7 719.3,148.3 718.7,148.9 718.1,149.5 717.4,150.1 716.7,150.7 716,151.3 715.2,151.8 714.4,152.3 713.6,152.9M716.2,159.2L715.2,159.8 714.2,160.3 713.2,160.9 712.2,161.4 711.1,161.8 710,162.3 708.8,162.7 707.7,163.2 706.5,163.6 705.3,163.9 704,164.3 702.8,164.6 701.5,164.9 700.2,165.2 698.9,165.5 697.6,165.7 696.2,165.9 694.9,166.1 693.5,166.2 692.2,166.4 690.8,166.5 689.4,166.6 688.1,166.6 686.7,166.6 685.3,166.6 684,166.6 682.6,166.6 681.2,166.5 679.9,166.4 678.5,166.2 677.2,166.1 675.9,165.9 674.6,165.7 673.3,165.5 672,165.2 670.8,164.9 669.5,164.6 668.3,164.3 667.1,163.9 666,163.6 664.8,163.2 663.7,162.7 662.6,162.3 661.6,161.8 660.6,161.3 659.6,160.8 658.6,160.3 657.7,159.8 656.8,159.2 656,158.6 655.2,158 654.4,157.4 653.7,156.8 653,156.2 652.3,155.5 651.7,154.8 651.2,154.2 650.7,153.5 650.2,152.8 649.8,152.1 649.4,151.3 649.1,150.6 648.8,149.9 648.5,149.1 648.4,148.4 648.2,147.7 648.1,146.9 648.1,146.1 648.1,145.4 648.1,144.6 648.2,143.9 648.4,143.1 648.6,142.4 648.8,141.6 649.1,140.9 649.4,140.1 649.8,139.4M725.1,138L725.5,138.8 725.8,139.5 726.1,140.2 726.4,140.9 726.5,141.7 726.7,142.4 726.8,143.2 726.8,143.9 726.8,144.7 726.8,145.4 726.7,146.2 726.5,147 726.3,147.7 726.1,148.4 725.8,149.2 725.5,149.9 725.1,150.7 724.6,151.4 724.2,152.1 723.6,152.8 723.1,153.5 722.5,154.2 721.8,154.9 721.1,155.5 720.4,156.2 719.6,156.8 718.8,157.4 718,158.1 717.1,158.7 716.2,159.2M722.4,171.8L721.2,172.5 720,173.1 718.8,173.8 717.5,174.4 716.2,175 714.8,175.5 713.5,176.1 712,176.6 710.6,177.1 709.1,177.5 707.6,177.9 706.1,178.3 704.5,178.7 703,179.1 701.4,179.4 699.8,179.7 698.1,179.9 696.5,180.1 694.9,180.3 693.2,180.5 691.5,180.6 689.9,180.7 688.2,180.8 686.5,180.8 684.9,180.8 683.2,180.8 681.5,180.7 679.9,180.6 678.2,180.5 676.6,180.3 675,180.1 673.4,179.9 671.8,179.7 670.2,179.4 668.7,179.1 667.1,178.7 665.6,178.3 664.2,177.9 662.7,177.5 661.3,177 659.9,176.6 658.5,176 657.2,175.5 656,174.9 654.7,174.4 653.5,173.7 652.3,173.1 651.2,172.4 650.2,171.8 649.1,171.1 648.1,170.3 647.2,169.6 646.3,168.8 645.5,168 644.7,167.3 644,166.4 643.3,165.6 642.7,164.8 642.1,163.9 641.6,163.1 641.1,162.2 640.7,161.3 640.4,160.4 640.1,159.5 639.9,158.6 639.7,157.7 639.6,156.8 639.5,155.9 639.5,154.9 639.6,154 639.7,153.1 639.9,152.2 640.1,151.3 640.4,150.4 640.8,149.5 641.2,148.6 641.6,147.7 642.1,146.8 642.7,145.9 643.4,145 644,144.2 644.8,143.4 645.6,142.5 646.4,141.7 647.3,140.9 648.2,140.1 649.2,139.4M724.8,137.3L725.8,138 726.8,138.7 727.7,139.5 728.6,140.2 729.4,141 730.2,141.8 730.9,142.6 731.6,143.4 732.2,144.3 732.8,145.1 733.3,146 733.8,146.9 734.2,147.7 734.5,148.6 734.8,149.5 735,150.4 735.2,151.3 735.3,152.3 735.4,153.2 735.3,154.1 735.3,155 735.2,155.9 735,156.8 734.7,157.8 734.4,158.7 734.1,159.6 733.7,160.5 733.2,161.4 732.7,162.2 732.1,163.1 731.5,164 730.8,164.8 730.1,165.7 729.3,166.5 728.4,167.3 727.6,168.1 726.6,168.9 725.6,169.6 724.6,170.4 723.5,171.1 722.4,171.8M742.8,184L741,185 739,186.1 737.1,187.1 735,188.1 733,189 730.8,189.9 728.6,190.7 726.4,191.6 724.1,192.3 721.7,193 719.4,193.7 716.9,194.4 714.5,195 712,195.5 709.5,196 706.9,196.4 704.4,196.8 701.8,197.2 699.2,197.5 696.5,197.7 693.9,198 691.3,198.1 688.6,198.2 686,198.3 683.3,198.3 680.7,198.2 678.1,198.1 675.4,198 672.8,197.8 670.2,197.5 667.7,197.2 665.1,196.8 662.6,196.4 660.1,196 657.7,195.5 655.2,195 652.9,194.4 650.5,193.7 648.2,193.1 646,192.3 643.8,191.6 641.6,190.7 639.5,189.9 637.5,189 635.5,188.1 633.6,187.1 631.8,186.1 630,185 628.3,183.9 626.7,182.8 625.1,181.7 623.6,180.5 622.2,179.3 620.9,178.1 619.7,176.8 618.5,175.5 617.4,174.2 616.4,172.9 615.5,171.5 614.7,170.2 614,168.8 613.3,167.4 612.8,166 612.3,164.5 612,163.1 611.7,161.7 611.5,160.2 611.4,158.8 611.4,157.3 611.5,155.8 611.7,154.4 612,152.9 612.3,151.5 612.8,150 613.4,148.6 614,147.2 614.7,145.8 615.6,144.4 616.5,143 617.5,141.6 618.6,140.2 619.7,138.9 621,137.6 622.3,136.3 623.7,135.1 625.2,133.8 626.8,132.6 628.4,131.4 630.1,130.3 631.9,129.2 633.8,128.1 635.7,127 637.7,126 639.7,125 641.8,124.1 644,123.2 646.2,122.4 648.4,121.5 650.7,120.8 653.1,120 655.5,119.4 657.9,118.7 660.4,118.1 662.9,117.6 665.4,117.1 668,116.7 670.5,116.3 673.1,115.9 675.8,115.6 678.4,115.4 681,115.2 683.7,115 686.3,114.9 689,114.9 691.6,114.9 694.3,114.9 696.9,115 699.6,115.2 702.2,115.4 704.8,115.7 707.3,116 709.9,116.3 712.4,116.7 714.9,117.2 717.3,117.7 719.8,118.2 722.1,118.8 724.5,119.5 726.8,120.2 729,120.9 731.2,121.7 733.3,122.5 735.4,123.3 737.4,124.2 739.4,125.2 741.3,126.2 743.1,127.2 744.9,128.2 746.6,129.3 748.2,130.4 749.8,131.6 751.2,132.8 752.6,134 754,135.2 755.2,136.5 756.3,137.7 757.4,139.1 758.4,140.4 759.3,141.7 760.1,143.1 760.8,144.5 761.4,145.9 762,147.3 762.4,148.7 762.8,150.2 763.1,151.6 763.2,153 763.3,154.5 763.3,155.9 763.2,157.4 763,158.8 762.7,160.3 762.3,161.7 761.9,163.2 761.3,164.6 760.7,166 759.9,167.4 759.1,168.8 758.2,170.2 757.2,171.6 756.1,172.9 754.9,174.3 753.7,175.6 752.4,176.8 751,178.1 749.5,179.3 747.9,180.5 746.3,181.7 744.6,182.8 742.8,184M745.3,189.2L743.3,190.3 741.3,191.4 739.3,192.5 737.2,193.5 735,194.5 732.7,195.4 730.4,196.3 728.1,197.1 725.7,197.9 723.3,198.7 720.8,199.4 718.3,200.1 715.7,200.7 713.1,201.3 710.5,201.8 707.8,202.2 705.1,202.7 702.4,203 699.7,203.3 696.9,203.6 694.2,203.8 691.4,204 688.7,204.1 685.9,204.1 683.1,204.1 680.4,204.1 677.6,204 674.9,203.8 672.2,203.6 669.5,203.3 666.8,203 664.1,202.7 661.5,202.2 658.9,201.8 656.3,201.3 653.8,200.7 651.3,200.1 648.9,199.4 646.5,198.7 644.1,197.9 641.8,197.1 639.6,196.3 637.4,195.4 635.3,194.5 633.2,193.5 631.2,192.5 629.3,191.4 627.5,190.3 625.7,189.2 624,188 622.3,186.8 620.8,185.6 619.3,184.3 617.9,183 616.6,181.7 615.4,180.4 614.3,179 613.3,177.6 612.3,176.2 611.5,174.8 610.7,173.3 610,171.9 609.5,170.4 609,168.9 608.6,167.4 608.3,165.9 608.1,164.4 608,162.9 608,161.4 608.1,159.8 608.3,158.3 608.6,156.8 609,155.3 609.5,153.8 610.1,152.3 610.7,150.8 611.5,149.3M762.5,145.1L763.3,146.5 764.1,148 764.7,149.4 765.3,150.9 765.8,152.4 766.1,153.9 766.4,155.4 766.6,156.9 766.7,158.4 766.7,159.9 766.6,161.5 766.4,163 766.1,164.5 765.7,166 765.2,167.5 764.6,169 763.9,170.5 763.2,171.9 762.3,173.4 761.3,174.8 760.3,176.3 759.2,177.7 757.9,179.1 756.6,180.4 755.3,181.8 753.8,183.1 752.2,184.4 750.6,185.6 748.9,186.8 747.1,188 745.3,189.2M746.1,195.8L744.2,197 742.1,198.1 740.1,199.1 737.9,200.2 735.7,201.1 733.4,202.1 731.1,203 728.7,203.9 726.3,204.7 723.8,205.4 721.3,206.2 718.7,206.8 716.1,207.5 713.5,208 710.8,208.6 708.1,209 705.4,209.5 702.6,209.8 699.9,210.2 697.1,210.4 694.3,210.6 691.5,210.8 688.7,210.9 685.9,211 683.1,211 680.3,210.9 677.5,210.8 674.7,210.6 671.9,210.4 669.2,210.2 666.5,209.8 663.8,209.5 661.1,209.1 658.5,208.6 655.9,208.1 653.3,207.5 650.8,206.8 648.3,206.2 645.9,205.5 643.5,204.7 641.1,203.9 638.9,203 636.7,202.1 634.5,201.1 632.4,200.2 630.4,199.1 628.4,198.1 626.6,196.9 624.7,195.8 623,194.6 621.4,193.4 619.8,192.2 618.3,190.9 616.9,189.6 615.6,188.2 614.3,186.9 613.2,185.5 612.1,184.1 611.2,182.6 610.3,181.2 609.5,179.7 608.9,178.2 608.3,176.7 607.8,175.2 607.4,173.7 607.1,172.2 606.9,170.6 606.8,169.1 606.8,167.5 606.9,166 607.1,164.5 607.4,162.9 607.8,161.4M766.9,158.5L767.3,160 767.6,161.5 767.8,163 767.9,164.6 767.9,166.1 767.8,167.7 767.6,169.2 767.2,170.7 766.8,172.3 766.4,173.8 765.8,175.3 765.1,176.8 764.3,178.3 763.4,179.8 762.4,181.2 761.4,182.7 760.2,184.1 759,185.5 757.7,186.9 756.3,188.3 754.8,189.6 753.2,190.9 751.5,192.2 749.8,193.4 748,194.6 746.1,195.8M751.6,206.1L749.5,207.3 747.3,208.5 745,209.7 742.6,210.8 740.2,211.9 737.7,212.9 735.2,213.9 732.6,214.9 729.9,215.8 727.2,216.6 724.4,217.4 721.6,218.1 718.8,218.8 715.9,219.5 713,220 710,220.5 707.1,221 704.1,221.4 701,221.8 698,222.1 694.9,222.3 691.9,222.5 688.8,222.6 685.7,222.7 682.7,222.7 679.6,222.6 676.6,222.5 673.5,222.3 670.5,222.1 667.5,221.8 664.5,221.4 661.6,221 658.6,220.6 655.7,220 652.9,219.5 650.1,218.8 647.3,218.2 644.6,217.4 641.9,216.6 639.3,215.8 636.8,214.9 634.3,213.9 631.9,213 629.5,211.9 627.2,210.8 625,209.7 622.9,208.5 620.8,207.3 618.9,206.1 617,204.8 615.2,203.4 613.4,202.1 611.8,200.7 610.3,199.2 608.8,197.8 607.5,196.3 606.2,194.8 605.1,193.2 604,191.7 603.1,190.1 602.2,188.5 601.5,186.8 600.8,185.2 600.3,183.6 599.9,181.9 599.6,180.2 599.3,178.5 599.2,176.8 599.2,175.2 599.3,173.5 599.6,171.8 599.9,170.1 600.3,168.4 600.9,166.7 601.5,165.1 602.3,163.4 603.1,161.8 604.1,160.1 605.1,158.5 606.3,156.9 607.5,155.4 608.9,153.8M766,151L767.3,152.5 768.6,154 769.7,155.6 770.7,157.1 771.7,158.7 772.5,160.3 773.2,161.9 773.9,163.6 774.4,165.2 774.8,166.9 775.1,168.6 775.3,170.2 775.4,171.9 775.4,173.6 775.3,175.3 775,177 774.7,178.6 774.3,180.3 773.7,182 773.1,183.6 772.3,185.3 771.5,186.9 770.5,188.5 769.5,190.1 768.3,191.7 767,193.3 765.7,194.8 764.2,196.3 762.7,197.8 761.1,199.3 759.4,200.7 757.5,202.1 755.6,203.5 753.7,204.8 751.6,206.1M763.2,214.5L760.6,216 758,217.4 755.3,218.8 752.6,220.1 749.7,221.4 746.8,222.6 743.8,223.8 740.7,224.9 737.6,226 734.4,227 731.1,227.9 727.8,228.8 724.4,229.6 721,230.3 717.6,231 714.1,231.6 710.6,232.2 707,232.7 703.5,233.1 699.9,233.4 696.3,233.7 692.7,233.9 689,234 685.4,234.1 681.8,234.1 678.2,234 674.6,233.9 671,233.7 667.4,233.4 663.9,233.1 660.4,232.7 656.9,232.2 653.4,231.6 650,231 646.7,230.4 643.3,229.6 640.1,228.8 636.9,227.9 633.7,227 630.7,226 627.6,225 624.7,223.8 621.8,222.7 619.1,221.5 616.4,220.2 613.7,218.8 611.2,217.5 608.8,216 606.5,214.5 604.2,213 602.1,211.5 600.1,209.8 598.1,208.2 596.3,206.5 594.6,204.8 593,203 591.5,201.2 590.2,199.4 588.9,197.6 587.8,195.7 586.8,193.8 585.9,191.9 585.2,189.9 584.5,188 584,186 583.6,184 583.4,182 583.3,180.1 583.3,178.1 583.4,176.1 583.7,174.1 584,172.1 584.5,170.1 585.2,168.1 585.9,166.1 586.8,164.2 587.8,162.2 589,160.3 590.2,158.4 591.6,156.5 593.1,154.7 594.7,152.9 596.4,151.1 598.2,149.3 600.1,147.6 602.2,145.9 604.3,144.2 606.6,142.6 608.9,141 611.4,139.5 613.9,138 616.5,136.6 619.2,135.2 622,133.9 624.9,132.6 627.9,131.4M744.3,128.2L747.3,129.3 750.3,130.4 753.1,131.6 755.9,132.8 758.6,134.1 761.2,135.4 763.7,136.8 766.1,138.3 768.4,139.7 770.6,141.3 772.8,142.9 774.8,144.5 776.7,146.1 778.5,147.8 780.2,149.5 781.7,151.3 783.2,153.1 784.5,154.9 785.8,156.8 786.9,158.6 787.8,160.5 788.7,162.4 789.4,164.4 790.1,166.3 790.5,168.3 790.9,170.3 791.1,172.2 791.3,174.2 791.2,176.2 791.1,178.2 790.8,180.2 790.4,182.2 789.9,184.1 789.3,186.1 788.5,188.1 787.6,190 786.6,191.9 785.5,193.8 784.2,195.7 782.9,197.6 781.4,199.4 779.8,201.3 778.1,203 776.3,204.8 774.3,206.5 772.3,208.2 770.2,209.8 767.9,211.4 765.6,213 763.2,214.5M774.7,243.2L771.8,244.9 768.8,246.6 765.7,248.2 762.5,249.7 759.2,251.2 755.8,252.6 752.3,253.9 748.8,255.2 745.2,256.4 741.5,257.6 737.8,258.6 733.9,259.6 730.1,260.6 726.1,261.4 722.2,262.2 718.2,262.9 714.1,263.5 710,264.1 705.9,264.6 701.8,265 697.6,265.3 693.5,265.5 689.3,265.7 685.1,265.8 680.9,265.8 676.8,265.7 672.6,265.6 668.5,265.3 664.4,265 660.3,264.6 656.2,264.1 652.2,263.6 648.2,263 644.3,262.3 640.4,261.5 636.6,260.6 632.8,259.7 629.1,258.7 625.5,257.6 622,256.5 618.5,255.3 615.1,254 611.8,252.6 608.6,251.2 605.5,249.7 602.5,248.2 599.6,246.6 596.8,245 594.1,243.3 591.5,241.5 589,239.7 586.7,237.8 584.4,235.9 582.3,234 580.4,232 578.5,230 576.8,227.9 575.3,225.8 573.8,223.7 572.5,221.5 571.4,219.3 570.3,217.1 569.5,214.9 568.7,212.6 568.2,210.4 567.7,208.1 567.4,205.8 567.3,203.5 567.3,201.2 567.4,198.9 567.7,196.6 568.2,194.3 568.8,192 569.5,189.7 570.4,187.4 571.4,185.2 572.5,182.9 573.8,180.7 575.3,178.5 576.9,176.4 578.6,174.2 580.4,172.1 582.4,170.1M792.4,166.3L794.3,168.3 796.1,170.3 797.8,172.4 799.4,174.5 800.8,176.6 802,178.8 803.2,181 804.2,183.2 805,185.4 805.7,187.7 806.3,189.9 806.7,192.2 807,194.5 807.1,196.8 807.1,199 806.9,201.3 806.6,203.6 806.1,205.9 805.5,208.2 804.8,210.5 803.9,212.7 802.9,215 801.7,217.2 800.4,219.4 799,221.6 797.4,223.7 795.7,225.8 793.9,227.9 791.9,230 789.8,232 787.6,234 785.2,235.9 782.8,237.8 780.2,239.7 777.5,241.5 774.7,243.2" fill="none" stroke="#5a5a52" stroke-width="0.45" opacity="0.85"/><path d="M773.5,242.2L766.2,246.3 758.2,250 749.8,253.4 740.8,256.3 731.4,258.9 721.7,260.9 711.7,262.5 701.6,263.7 691.3,264.3 681,264.5 670.8,264.1 660.6,263.3 650.7,262 641,260.2 631.7,258 622.8,255.3 614.4,252.1 606.6,248.6 599.3,244.7 592.8,240.5 586.9,235.9 581.8,231.1 577.5,226 574.1,220.8 571.5,215.3 569.7,209.8 568.9,204.1 569,198.4 570,192.8 571.9,187.1 574.7,181.6 578.3,176.2 582.8,171 588.1,166 594.1,161.3 600.9,156.8 608.3,152.7 616.3,149 624.8,145.6 633.8,142.6 643.3,140.1 653.1,138 663.1,136.4 673.3,135.3 683.6,134.7 694,134.6 704.2,135 714.4,135.8 724.4,137.2 734,139 743.3,141.3 752.2,144 760.6,147.1 768.4,150.7 775.6,154.6 782.1,158.9 787.9,163.4 792.9,168.3 797.1,173.4 800.5,178.6 803,184.1 804.7,189.6 805.5,195.2 805.3,200.9 804.3,206.5 802.4,212.1 799.6,217.6 796,222.9 791.5,228.1 786.2,233.1 780.2,237.8 773.5,242.2Z" fill="none" stroke="#e8964a" stroke-width="0.6"/><path d="M765.3,219.8L762.1,221.7 758.7,223.5 755.1,225.2 751.5,226.9 747.7,228.4 743.8,229.9 739.8,231.3 735.7,232.6 731.5,233.7 727.2,234.8 722.9,235.8 718.4,236.7 714,237.5 709.4,238.2 704.9,238.7 700.2,239.2 695.6,239.5 691,239.8 686.3,239.9 681.6,239.9 677,239.8 672.4,239.6 667.8,239.3 663.2,238.9 658.7,238.3 654.2,237.7 649.8,236.9 645.5,236 641.2,235.1 637.1,234 633,232.8 629,231.6 625.2,230.2 621.4,228.8 617.8,227.2 614.3,225.6 611,223.9 607.8,222.1 604.7,220.2 601.8,218.2 599.1,216.2 596.5,214.1 594.1,211.9 591.9,209.7 589.9,207.5 588.1,205.1 586.4,202.8 584.9,200.4 583.7,197.9 582.6,195.5 581.7,193 581,190.4 580.6,187.9 580.3,185.3 580.3,182.8 580.4,180.2 580.8,177.6 581.3,175.1 582.1,172.5 583,170 584.2,167.5 585.5,165 587.1,162.5 588.8,160.1 590.7,157.7 592.9,155.4 595.2,153.1M780.6,150.7L782.8,152.9 784.8,155.2 786.6,157.5 788.3,159.9 789.7,162.3 790.9,164.7 792,167.2 792.8,169.7 793.5,172.2 793.9,174.7 794.2,177.3 794.2,179.8 794.1,182.4 793.7,184.9 793.1,187.5 792.4,190 791.4,192.5 790.2,195 788.9,197.5 787.3,200 785.6,202.4 783.7,204.7 781.6,207 779.3,209.3 776.8,211.5 774.2,213.7 771.4,215.8 768.4,217.8 765.3,219.8" fill="none" stroke="#e8964a" stroke-width="0.6"/><path d="M664.1,74.3L820.8,152.4M644.7,71.7L924.5,211.1M634.9,72.8L923.4,216.5M627.2,74.9L920.1,220.7M621,77.7L744.4,139.1 745.4,139.5 759.6,141.5 769.3,145.2 781.3,152.9 793.2,163.3 915,224.1M615.5,81L723.7,134.8 724.8,135.2 740.1,131.5 748.7,131.4 757.4,133.3 767.2,137.8 778,145.6 791.1,159 803,174 910.7,227.8M610.1,84.3L708.6,133.2 709.6,133.2 724.9,125.5 731.4,123.8 735.8,124 759.7,133.2 778.1,144.1 784.6,149.6 798.7,168.4 807.3,181.8 808.4,182.8 905.4,231M604.7,87.5L695.5,132.7 696.6,132.4 710.8,122.2 714.1,120.6 716.2,120.3 725,121.7 778.2,147.6 787.9,154.9 791.2,158.1 809.5,188.5 810.6,189.8 900,234.3M599.3,90.8L683.6,132.7 684.7,132.5 697.8,120.8 700,119.4 702.2,118.8 708.7,119.4 756.5,141.6 784.7,156.7 792.3,163 795.5,166.9 810.7,195 811.8,196.3 894.7,237.5M593.9,94.1L672.8,133.2 673.9,133.1 687,119.8 688.1,119.1 690.2,118.4 695.7,118.7 713.1,126.4 716.4,127 717.5,126 719.6,121.2 720.7,119.7 721.8,118.9 724,118.4 729.4,119.2 745.7,126.1 757.7,133.8 760.9,136.7 763.1,139.4 764.2,141.3 765.3,143.9 767.4,150.8 768.5,152.8 771.8,155.5 786.9,163.5 793.4,169 795.6,171.5 797.7,174.8 810.7,201.1 811.8,202.2 889.4,240.7M588.5,97.3L663,134.3 664.1,134 676.1,120.3 677.2,119.4 679.4,118.7 683.8,118.8 697.9,124.8 700.1,125.2 701.2,124.7 703.4,118 704.5,116.2 705.6,115.4 707.7,114.8 713.2,115.3 755.6,135.4 762.1,139.9 766.4,144 768.6,146.7 769.7,148.5 770.7,151.4 772.9,160.3 774,161.8 776.2,163.6 788.1,170 793.5,174.7 795.6,177.2 797.8,180.7 809.7,206.2 810.8,207.6 884,244M583.1,100.6L653.3,135.4 654.4,135.8 657.6,132.2 665.3,122.3 666.4,121.1 667.5,120.2 668.6,119.8 672.9,119.4 676.2,120.3 686,124.8 688.2,124.8 689.3,121.8 690.4,117.3 691.5,115.2 692.6,114.3 694.7,113.7 698,113.7 760,143.3 765.4,147.1 769.7,151.6 770.8,153.2 771.9,155.1 773,158.3 774,163.9 775.1,167.9 777.3,170.1 788.1,175.9 793.5,181 795.7,183.8 808.7,212.3 878.7,247.2M577.7,103.9L645.7,137.5 649,133.6 656.6,123.1 657.7,122 658.8,121.3 662.1,120.6 664.3,120.7 675.2,125.4 676.3,125.5 677.4,125.2 679.5,116.8 680.6,115 681.7,114.3 683.9,113.7 686.1,113.6 757.8,147.6 765.4,152.5 769.8,157 771.9,160.3 773,163.2 775.2,173.7 777.3,176 787.1,181.3 791.4,185.4 793.6,188.1 795.7,192.1 805.5,215.1 806.5,217.2 873.3,250.4M572.3,107.1L637,139.2 638.1,138.9 648,125 649.1,123.8 650.1,123 653.4,122.2 655.6,122.3 665.4,126.5 666.5,126.6 667.6,126.4 669.8,117.4 670.9,115.7 672,115 674.2,114.3 676.4,114.3 759,154.1 765.5,158.5 768.7,162 770.9,165.3 772,168 774.1,179.2 776.3,181.4 785,186.1 787.1,187.9 790.4,191.5 792.5,194.9 803.3,220.8 804.4,222.2 868,253.7M566.9,110.4L629.5,141.4 630.5,140.9 640.4,126.5 641.5,125.4 642.6,124.7 645.9,124 648,124.3 656.8,128.1 657.9,128.2 659,127.7 660.1,122.1 661.1,118.2 662.2,116.8 663.3,116.2 665.5,115.6 667.7,115.7 696,127.5 698.2,127.9 699.3,126.9 701.5,123.2 702.6,122.4 703.7,121.9 705.8,121.7 711.3,122.9 718.9,126.5 724.3,130.4 727.6,133.8 729.7,137.2 731.9,143 733,145.1 736.3,147.6 762.3,162.3 764.5,164 767.7,167.9 768.8,169.6 769.9,172.1 771,177.1 772,183.7 773.1,185.3 774.2,186.3 782.9,191.1 787.2,195.4 789.3,198.6 800.2,225 801.2,226.5 862.7,256.9M561.5,113.7L621.9,143.6 623,143.7 625.2,140.9 632.8,128.9 633.9,127.7 635,126.9 638.3,126.2 640.5,126.4 649.2,130.2 650.3,130.1 651.4,127.4 652.5,121.4 653.6,119.1 654.7,118.2 656.9,117.4 659,117.3 683,127.2 685.2,127.6 686.3,126 687.4,122.8 688.5,121 689.6,120.1 691.8,119.3 693.9,119.1 698.3,119.9 715.7,127.8 724.4,133.4 727.6,136.4 730.9,140.5 732,142.5 733.1,145.4 734.2,149.7 735.2,152.3 737.4,154.1 760.2,167.1 762.3,169 765.6,173.1 766.7,175.1 767.8,178.4 768.8,185.6 769.9,189.3 771,190.5 779.7,195.3 781.8,197.3 785.1,201.2 787.2,205.4 795.9,227.4 797,229.8 798,230.8 857.3,260.1M556.1,116.9L615.4,146.3 616.5,145.9 626.3,130.8 627.4,129.7 628.5,129.2 631.8,128.6 634,129 641.6,132.5 642.7,132.3 643.8,130.4 644.9,123.9 646,121.4 647.1,120.4 649.3,119.5 651.5,119.5 673.3,128.3 674.4,128.5 675.5,128.5 677.7,122.4 678.8,120.9 679.8,120.1 682,119.3 684.2,119.2 691.8,121.2 717.9,134.1 725.5,139.7 727.7,141.9 729.9,144.9 731,146.7 732,149.3 734.2,157.6 736.4,159.5 757,171.4 759.2,173.2 762.4,177.4 763.5,179.5 764.6,183.1 765.7,190.7 766.7,193.7 767.8,194.9 775.4,199 777.6,200.7 780.8,204.5 783,208.3 792.7,233.1 793.8,234.6 852,263.4M550.7,120.2L608.9,149 610,148.7 619.9,133.4 621,132.4 622,131.8 625.3,131.3 627.5,131.7 635.2,135 636.3,134.8 638.4,125.1 639.5,123.4 640.6,122.6 642.8,121.9 645,122 665.7,130.4 666.8,130.4 667.9,128.5 669,124.4 670.1,122.5 671.2,121.6 673.4,120.6 675.6,120.6 681,121.7 716.9,139.3 723.4,144.2 725.6,146.5 727.8,149.6 728.9,151.6 729.9,154.6 731,159.8 732.1,162.7 733.2,163.8 753.8,175.8 756,177.8 758.1,180.7 759.2,182.6 760.3,185.4 762.5,197.3 763.5,198.5 772.2,203.5 776.5,208.2 777.6,209.9 788.4,237 789.5,238.3 846.6,266.6M545.3,123.5L603.5,152.2 605.7,149.3 613.4,136.8 614.5,135.5 615.6,134.8 618.8,134.1 621,134.5 628.7,137.9 629.8,137.7 630.9,134.5 632,128.4 633.1,126.3 634.2,125.4 636.3,124.6 638.5,124.7 658.2,132.6 659.3,132.8 660.4,132.3 661.5,127.9 662.5,125.3 663.6,124.1 665.8,122.9 668,122.7 672.4,123.4 714.8,144.2 720.2,148.5 722.4,150.9 724.6,154.2 725.7,156.5 726.7,160.2 727.8,165.7 728.9,167.3 749.5,179.6 751.7,181.7 753.9,184.6 754.9,186.6 756,189.7 757.1,196.9 758.2,201.2 759.3,202.4 766.8,206.6 769,208.4 772.3,212.3 773.3,214.1 783.1,239.1 784.2,241.5 841.3,269.8M539.9,126.7L597,155 598.1,155 608,139.5 609.1,138.4 610.2,137.8 613.5,137.2 615.7,137.7 622.2,140.6 623.3,140.9 624.4,140.6 625.5,134.8 626.6,130.4 627.7,129 629.9,127.8 631,127.6 633.1,127.9 652.8,135.7 653.9,135.7 656.1,128.7 657.2,127.2 659.4,125.8 660.4,125.5 665.9,126.1 710.5,148 716,152.4 718.1,154.8 720.3,158.4 721.4,161 723.6,170.1 724.6,171.2 744.2,182.8 746.3,184.7 748.5,187.5 749.6,189.2 750.7,191.8 752.8,204 753.9,205.4 762.6,210.5 765.8,213.9 768,216.9 778.8,244.3 779.9,245.4 836,273.1M534.5,130L591.6,158.2 592.7,158.4 594.9,155.4 602.6,142.9 603.7,141.8 604.8,141.2 608.1,140.5 610.3,141 616.8,143.9 617.9,144.2 619,144 621.2,134.1 622.3,132.4 623.4,131.7 625.6,131 627.8,131.2 647.4,139.1 648.5,139.1 649.6,136.9 650.7,132.7 651.8,130.9 654,129.3 655.1,129 660.5,129.5 704.1,150.6 710.6,155.8 712.8,158.4 714.9,162.1 716,165 717.1,170.3 718.2,173.5 719.3,174.6 738.8,186 741,188 743.1,190.8 744.2,192.7 745.3,195.4 747.5,207.5 748.6,208.8 756.1,213 758.3,214.8 761.5,218.6 762.6,220.3 773.4,247.7 774.5,248.6 830.6,276.3M529.1,133.3L587.4,162 588.4,161.2 597.2,147.2 598.3,145.8 599.4,144.9 602.7,144.1 604.9,144.3 612.5,147.7 613.6,147.7 614.7,146.7 615.8,140 616.9,136.9 618,135.7 620.2,134.7 622.4,134.6 643.1,142.9 644.2,143 645.3,141.5 646.4,137.1 647.5,135.1 648.6,134.1 650.8,133 653,133 658.4,134.1 697.6,153.5 704.1,158.7 706.3,161.4 708.5,165.2 709.6,168.3 710.7,173.7 711.7,176.3 712.8,177.3 732.4,188.7 734.5,190.5 736.7,193.2 737.8,194.8 738.9,197.1 739.9,201.3 741,209.1 742.1,211.2 743.2,212.2 750.8,216.4 752.9,218.3 756.2,222.4 757.3,224.3 767,249.4 768.1,251.3 825.3,279.5M523.7,136.6L583.1,165.8 585.3,163 592.9,150.7 594,149.4 595.1,148.6 598.4,147.8 600.6,148.1 608.3,151.5 609.3,151.6 610.4,150.9 611.5,144.5 612.6,141 613.7,139.7 615.9,138.7 618.1,138.5 639.9,147.2 641,147.3 642.1,146.5 643.2,142.4 644.3,140 645.4,139 647.6,137.9 649.8,137.7 656.3,139.1 687.9,154.5 695.5,160.2 697.7,162.6 699.9,165.8 700.9,168 702,171.4 703.1,176.6 704.2,178.5 705.3,179.5 725.9,191.4 728.1,193.3 730.3,196.1 731.3,197.8 732.4,200.1 733.5,204.7 734.6,212.2 735.7,213.9 736.8,214.9 744.3,219.1 746.5,221 749.8,224.9 750.8,226.8 760.6,251.6 761.7,253.9 819.9,282.8M518.3,139.8L578.8,169.6 579.9,168.6 588.6,155 589.7,153.6 590.8,152.7 594.1,151.9 596.3,152 605.1,155.8 606.1,155.6 607.2,153.1 608.3,146.9 609.4,144.6 610.5,143.7 612.7,142.8 614.9,142.8 637.8,152.1 638.9,152.3 640,152.3 642.2,146.5 643.3,145 644.4,144.3 646.6,143.5 648.8,143.4 660.8,147.1 678.2,156.2 684.7,160.8 688,164 690.1,166.9 691.2,168.7 692.3,171.2 694.5,179.2 696.7,181.2 718.4,193.6 720.6,195.4 723.8,199.5 724.9,201.6 726,204.9 727.1,212.2 728.1,215.8 729.2,217 737.9,221.9 742.2,226.4 744.4,229.9 754.1,254.6 755.2,256.7 814.6,286M512.9,143.1L574.5,173.4 575.6,173.3 585.4,158.7 586.5,157.5 587.6,156.8 590.9,156.1 593.1,156.3 601.9,160.1 603,160.1 604,158.6 605.1,152.4 606.2,149.5 607.3,148.4 609.5,147.5 611.7,147.3 637.9,158.1 640.1,158.5 641.2,157.4 642.3,154.7 643.4,152.8 644.5,151.8 645.6,151.3 648.8,151 653.2,151.7 666.3,157.5 672.8,161.9 677.2,166.1 679.3,169 680.4,171.1 681.5,174.1 682.6,177.9 683.7,180 685.9,181.7 709.8,195.1 713,197.8 716.3,202.1 717.4,204.3 718.4,208.2 719.5,215.6 720.6,218.1 721.7,219.3 730.4,224 734.7,228.4 736.9,231.6 747.7,258.2 748.8,259.4 809.3,289.2M507.5,146.4L571.3,177.8 572.4,177.4 582.2,163.2 583.3,162 584.4,161.3 587.7,160.6 589.9,160.7 599.8,164.9 600.9,164.8 601.9,162.5 603,156.7 604.1,154.3 605.2,153.3 607.4,152.5 609.6,152.3 644.6,166.7 645.6,167 646.7,166.8 650,164.8 652.2,164.2 654.4,164.5 657.6,165.9 660.9,168.5 663.1,171.2 666.3,176.5 667.4,177.7 701.1,196.9 704.4,199.6 707.7,203.8 708.7,205.8 709.8,209.3 710.9,216.2 712,219.6 713.1,220.8 721.8,225.5 723.9,227.2 727.2,230.7 729.4,234 740.2,260.1 741.3,261.6 803.9,292.5M502.1,149.6L568.1,182.1 569.2,182.2 580.1,167.4 581.2,166.4 582.3,165.9 585.6,165.4 587.8,165.6 597.7,169.9 598.8,170 599.8,169.7 602,160.9 603.1,159.3 604.2,158.5 606.4,157.9 608.6,157.9 686,194.6 692.5,198.9 695.8,202 698,204.7 699,206.5 700.1,209.3 702.3,220.2 704.5,222.5 713.2,227.2 715.3,228.8 719.7,233.5 721.8,237.2 732.7,262.7 733.8,263.8 798.6,295.7M496.7,152.9L566,187 567.1,186.7 578,172.6 579.1,171.6 580.2,171 583.5,170.5 585.7,170.6 596.7,175.3 597.7,175.6 598.8,175.6 599.9,174.2 601,169.1 602.1,166.2 603.2,165 604.3,164.4 607.6,164 610.9,164.5 678.5,197.4 682.8,200.5 687.2,205.2 688.3,206.9 689.3,209.1 690.4,213.1 691.5,219.3 692.6,221.8 694.8,223.7 704.5,228.9 708.9,232.9 711.1,235.4 713.2,239.1 724.1,264 725.1,265.4 793.2,298.9M491.3,156.2L563.9,191.9 565,191.9 577,177.7 578.1,176.8 580.3,176.1 583.6,176 586.9,176.8 597.8,181.8 600,182 601.1,180.1 602.2,175.7 603.3,173.1 604.4,172 605.5,171.4 608.8,171.1 613.1,171.7 665.5,197.1 670.9,201.2 674.2,204.5 676.4,207.4 677.5,209.6 678.5,213.3 679.6,218.7 680.7,221.7 682.9,223.7 694.8,230.1 700.3,235.2 702.4,238 715.5,266 716.5,267 787.9,302.2M485.9,159.4L562.9,197.3 564,197.1 576,184 577.1,183.1 578.2,182.5 580.4,182 584.8,182.2 600.1,188.8 603.4,189.3 604.5,187.7 605.6,184.5 606.7,181.9 607.8,180.7 608.9,180.1 611,179.7 618.7,181 647.1,194.4 656.9,201.3 660.1,204.5 662.3,207.5 663.4,209.8 665.6,217.8 666.7,220.4 669.9,223.2 683,230 689.5,235.7 691.7,238.3 705.8,266.9 706.8,268.2 782.6,305.4M480.5,162.7L563,203.2 566.3,200.4 576.1,190.8 578.3,189.2 580.5,188.6 586,188.9 606.8,198 611.1,199.2 612.2,199.2 613.3,198.6 616.6,194.7 617.7,193.9 618.8,193.5 621,193.3 626.4,194.7 634.1,198.6 638.4,201.9 640.6,204.2 642.8,207.6 646,214.6 647.1,216.4 648.2,217.5 652.6,220.5 671.1,230.2 677.6,235.7 679.8,238.2 696.1,268.6 777.2,308.6M475.1,166L563.1,209.2 564.2,208.9 577.3,198.3 580.6,196.4 582.8,196 590.5,196.9 654.8,228 663.5,234.6 666.8,237.9 684.2,268 685.3,269.3 771.9,311.9M469.7,169.2L564.3,215.7 565.4,216 580.7,206.7 585.1,205 588.4,204.8 601.5,208.2 637.5,226 648.4,233.8 652.7,238.3 672.3,268.6 766.5,315.1M464.3,172.5L568.7,223.7 585.2,217.7 592.8,216.7 599.4,217.3 615.8,223.7 627.8,231.2 637.6,240.5 658.3,267.7 761.2,318.3M458.9,175.8L575.4,233 590.7,232 600.6,233.6 610.4,237.8 621.3,245.3 640.9,265.1 755.9,321.6M453.8,179.2L749.7,324.4M450,183.2L742.7,326.8M447.9,188.1L734.1,328.5M448.6,194.4L722.9,328.8M664.1,74.6C660,72.8 641.2,69.9 644.7,72M924.7,211.4C928.1,213.5 927.7,218.5 923.6,216.8M634.9,73C630.8,71.3 623.6,73.1 627.2,75.1M920.6,221.2C924.1,223.2 920.1,226.5 916,224.8M621,78C616.8,76.2 612,79.2 615.5,81.3M910.7,228.1C914.2,230.1 909.4,233 905.4,231.3M610.1,84.5C606,82.8 601.2,85.7 604.7,87.8M900,234.5C903.5,236.6 898.7,239.5 894.7,237.8M599.3,91.1C595.2,89.3 590.4,92.2 593.9,94.3M889.4,241C892.9,243 888.1,245.9 884,244.2M588.5,97.6C584.4,95.8 579.6,98.8 583.1,100.9M878.7,247.5C882.2,249.5 877.4,252.4 873.3,250.7M577.7,104.1C573.6,102.4 568.8,105.3 572.3,107.4M868,253.9C871.5,256 866.7,258.9 862.7,257.2M566.9,110.7C562.8,108.9 558,111.9 561.5,113.9M857.3,260.4C860.8,262.4 856,265.3 852,263.6M556.1,117.2C552,115.5 547.1,118.4 550.7,120.5M846.6,266.9C850.2,268.9 845.4,271.8 841.3,270.1M545.3,123.7C541.2,122 536.3,124.9 539.9,127M836,273.3C839.5,275.4 834.7,278.3 830.6,276.6M534.5,130.3C530.4,128.5 525.5,131.5 529.1,133.5M825.3,279.8C828.8,281.8 824,284.7 819.9,283M523.7,136.8C519.6,135.1 514.7,138 518.3,140.1M814.6,286.3C818.1,288.3 813.3,291.2 809.3,289.5M512.9,143.3C508.8,141.6 503.9,144.5 507.5,146.6M803.9,292.7C807.4,294.8 802.6,297.7 798.6,296M502.1,149.9C498,148.1 493.1,151.1 496.7,153.2M793.2,299.2C796.8,301.2 792,304.1 787.9,302.4M491.3,156.4C487.2,154.7 482.3,157.6 485.9,159.7M782.6,305.7C786.1,307.7 781.3,310.6 777.2,308.9M480.5,163C476.4,161.2 471.5,164.2 475.1,166.2M771.9,312.1C775.4,314.2 770.6,317.1 766.5,315.4M469.7,169.5C465.6,167.8 460.7,170.7 464.3,172.8M761.2,318.6C764.7,320.6 759.9,323.5 755.9,321.8M458.9,176C454.8,174.3 450.2,177.4 453.8,179.4M750.3,324.9C753.8,327 747.4,329.1 743.4,327.4M450,183.5C445.8,181.8 444.3,186.3 447.9,188.4M734.8,329.1C738.3,331.1 727.4,331 723.4,329.3" fill="none" stroke="#2f5c32" stroke-width="0.8" stroke-linejoin="round"/><path d="M825.3,141 L825.3,148.5 Q825.3,154.6 821.4,153" fill="none" stroke="#2f5c32" stroke-width="0.8"/><g fill="none" stroke="#ff3535" stroke-width="0.7" stroke-dasharray="2.1 1.7"><path d="M825.3,48 L825.3,141"/><path d="M682.9,135 L682.9,81.5 L805.3,129.8 L805.3,227"/><path d="M733.5,212 L733.5,316.5"/></g><path d="M807.6,38.9 L824.7,29.5 L842,38.9 L824.7,47.8 Z M807.6,38.9 L842,38.9 M824.7,29.5 L824.7,47.8" fill="none" stroke="#ff3535" stroke-width="0.75"/><path d="M807.6,38.9 L824.7,36.5 L842,38.9 M824.7,29.5 L824.7,36.5" fill="none" stroke="#ff3535" stroke-width="0.4"/><path d="M733.5,316.5 L733.5,327.5" fill="none" stroke="#2f5c32" stroke-width="0.8"/><g stroke-width="1" fill="none"><path d="M686.5,139 L686.5,131.5" stroke="#2030d0"/><path d="M686.5,139 L692,136" stroke="#20a020"/><path d="M686.5,139 L693,142" stroke="#e02020"/></g></svg>
<div id="status"></div>
<div style="position:absolute;left:400.3px;top:-1px;width:20.5px;height:20.6px;box-sizing:border-box;border:0.8px solid #cfcfcf;background:#fafafa"></div>
<div style="position:absolute;left:407.8px;top:4.7px;width:4.4px;height:4.2px;background:#2e6da4"></div>
<div id="tb"></div>
<svg id="tbar" width="18" height="98" viewBox="0 0 18 98" style="position:absolute;left:1006px;top:2px">
 <rect x="0" y="0" width="18.5" height="96.6" fill="#dcdcdc" stroke="#c2c2c2" stroke-width="0.6"/>
 <g stroke="#c4c4c4" stroke-width="0.6"><path d="M0 16.2H18M0 32.3H18M0 48.3H18M0 64.2H18M0 80.3H18"/></g>
 <!-- home -->
 <path d="M5.6 9.4V14h7.4V9.4L9.3 6z" fill="#f4f4f4" stroke="#8a8f94" stroke-width="0.5"/>
 <rect x="8.3" y="10.6" width="2.2" height="3.4" fill="#c8ccd0" stroke="#8a8f94" stroke-width="0.3"/>
 <path d="M4.3 9.8L9.3 4.6L14.3 9.8" fill="none" stroke="#2f7cab" stroke-width="1.3" stroke-linejoin="miter"/>
 <!-- cylinder box -->
 <path d="M5.2 22.2L9.4 20.6L13.4 22.2V28.6L9.4 30.2L5.2 28.6Z" fill="#d0d0d0" stroke="#8c8c8c" stroke-width="0.5"/>
 <path d="M5.2 22.2L9.4 23.6L13.4 22.2M9.4 23.6V30.2" fill="none" stroke="#9a9a9a" stroke-width="0.4"/>
 <path d="M7.2 22.9V29.3M11.4 22.9V29.3" fill="none" stroke="#b4b4b4" stroke-width="0.4"/>
 <!-- folder -->
 <path d="M4.8 44.6V38.2H7.6L8.4 39.2H12.6V40.4" fill="#e6e6e6" stroke="#858585" stroke-width="0.5"/>
 <path d="M4.8 44.6L6.6 40.4H14.2L12.4 44.6Z" fill="#fafafa" stroke="#858585" stroke-width="0.5"/>
 <!-- yellow grid -->
 <rect x="4.6" y="53.2" width="9" height="7.6" fill="#f6f6f6" stroke="#b9b9b9" stroke-width="0.4"/>
 <rect x="5" y="53.8" width="3.4" height="1.8" fill="#f3c614"/><rect x="9.4" y="53.8" width="3.6" height="1.8" fill="#f3c614"/>
 <path d="M5 60L6.9 56.6L8.8 60Z" fill="#f0bf10"/>
 <rect x="9.6" y="57.2" width="3.6" height="1" fill="#7a7a7a"/><rect x="10.2" y="59" width="3" height="1.4" fill="#d9d9d9" stroke="#9a9a9a" stroke-width="0.3"/>
 <!-- sphere -->
 <circle cx="9.3" cy="72.8" r="4.7" fill="#2b5fc0"/>
 <path d="M9.3 72.8V68.1A4.7 4.7 0 0 1 14 72.8Z" fill="#d8232a"/>
 <path d="M9.3 72.8H14A4.7 4.7 0 0 1 9.3 77.5Z" fill="#f2c11a"/>
 <path d="M9.3 72.8V77.5A4.7 4.7 0 0 1 4.6 72.8Z" fill="#3aa535"/>
 <path d="M9.3 68.1A4.7 4.7 0 0 0 4.6 72.8H9.3Z" fill="#2f6fd0"/>
 <circle cx="9.3" cy="72.8" r="4.7" fill="none" stroke="#555" stroke-width="0.4" opacity="0.6"/>
 <ellipse cx="8.2" cy="70.6" rx="2.2" ry="1.3" fill="#fff" opacity="0.35"/>
 <!-- list -->
 <rect x="4.4" y="84.6" width="9.4" height="8.8" fill="#fafafa" stroke="#7d99ad" stroke-width="0.5"/>
 <rect x="4.4" y="84.6" width="9.4" height="1.6" fill="#3f86b4"/>
 <rect x="4.4" y="86.2" width="2.6" height="7.2" fill="#6aa3c6"/>
 <path d="M7.8 87.8H13M7.8 89.8H13M7.8 91.8H13" stroke="#333" stroke-width="0.7"/>
</svg>
<div id="dlg">
 <div style="left:0;top:0;width:1.6px;height:442.3px;background:#b2b2b2"></div>
 <div class="tabs">
  <div class="tab" style="left:6.5px;width:26.5px"><span style="left:4.1px">Tool</span></div>
  <div class="tab" style="left:33px;width:27.5px"><span style="left:4.1px">F/S</span></div>
  <div class="tab" style="left:93.5px;width:26.5px"><span style="left:2.6px">Finish</span></div>
  <div class="tab" style="left:120px;width:27.5px"><span style="left:3.1px">NC</span></div>
  <div class="tab" style="left:147.5px;width:27px"><span style="left:3.6px">Links</span></div>
  <div class="tab" style="left:174.5px;width:51px"><span style="left:3.6px">Entry/Retract</span></div>
  <div class="tab" style="left:225.5px;width:40px"><span style="left:3.6px">Advanced</span></div>
  <div class="tab" style="left:265.5px;width:27px"><span style="left:3.6px">Rest</span></div>
  <div class="tab" style="left:292.5px;width:33px"><span style="left:3.6px">Posting</span></div>
  <div class="tab" style="left:325.5px;width:37.5px"><span style="left:3.1px">Statistics</span></div>
 </div>
 <div class="panel"></div>
 <div class="tab sel" style="left:60px;width:33.5px"><span style="left:4.6px">Pattern</span></div>

 <!-- Pattern type group -->
 <div class="grp" style="left:19.5px;top:24.5px;width:162px;height:72.5px"></div>
 <div class="glab" style="left:20.5px;top:20.5px">Pattern type</div>
 <div class="lab" style="left:0;width:86.5px;top:37px">Pattern :</div>
 <div class="combo hot" style="left:89.1px;top:36px;width:85px;height:10.5px"><span>Slice</span><svg class="chev" viewBox="0 0 8 5"><path d="M1 1 L4 4 L7 1" fill="none" stroke="#606060" stroke-width="1"/></svg></div>
 <div class="ddl" style="left:89.3px;top:46.3px;width:85.3px;height:49.9px">
   <div class="it selit"><span>Slice</span></div>
   <div class="it"><span>Radial</span></div>
   <div class="it"><span>Spiral</span></div>
   <div class="it"><span>Flowline</span></div>
 </div>

 <!-- Pattern options group -->
 <div class="grp" style="left:19.5px;top:108.5px;width:162px;height:195px"></div>
 <div class="glab" style="left:20.5px;top:104.5px">Pattern options</div>

 <div class="lab" style="left:0;width:103px;top:122px">Cut angle :</div>
 <div class="inp" style="left:107px;top:119.5px;width:54px;height:13px"><span>0deg</span></div>
 <div class="spin" style="left:163px;top:120px"><svg viewBox="0 0 11 12" width="11" height="12"><rect x="0.25" y="0.25" width="10.5" height="11.5" fill="#f0f0f0" stroke="#e2e2e2" stroke-width="0.5"/><path d="M0.5 6H10.5" stroke="#dedede" stroke-width="0.5"/><g fill="#1c1c1c"><path d="M5.6 1.9L7.3 4H3.9Z"/><path d="M5.6 10.2L7.3 8.1H3.9Z"/></g></svg></div>

 <div class="lab" style="left:0;width:86.5px;top:142px">Cross machining :</div>
 <div class="combo" style="left:89px;top:138px;width:85.5px;height:10.5px"><span>None</span><svg class="chev" viewBox="0 0 8 5"><path d="M1 1 L4 4 L7 1" fill="none" stroke="#8a8a8a" stroke-width="1"/></svg></div>

 <div class="lab" style="left:0;width:103px;top:159.5px">Minimum radius :</div>
 <div class="inp dis" style="left:107px;top:158px;width:54px;height:12.5px"><span>0.03mm</span></div>
 <div class="spin dis" style="left:163px;top:158.5px"><svg viewBox="0 0 11 12" width="11" height="12"><rect x="0.25" y="0.25" width="10.5" height="11.5" fill="#f0f0f0" stroke="#e2e2e2" stroke-width="0.5"/><path d="M0.5 6H10.5" stroke="#dedede" stroke-width="0.5"/><g fill="#5c5c5c"><path d="M5.6 2.1L7.1 3.9H4.1Z"/><path d="M5.6 10L7.1 8.2H4.1Z"/></g></svg></div>

 <div class="lab" style="left:0;width:103px;top:178.5px">Maximum radius :</div>
 <div class="inp dis" style="left:107px;top:176.5px;width:54px;height:12px"><span>250mm</span></div>
 <div class="spin dis" style="left:163px;top:176.5px"><svg viewBox="0 0 11 12" width="11" height="12"><rect x="0.25" y="0.25" width="10.5" height="11.5" fill="#f0f0f0" stroke="#e2e2e2" stroke-width="0.5"/><path d="M0.5 6H10.5" stroke="#dedede" stroke-width="0.5"/><g fill="#5c5c5c"><path d="M5.6 2.1L7.1 3.9H4.1Z"/><path d="M5.6 10L7.1 8.2H4.1Z"/></g></svg></div>

 <div class="lab" style="left:0;width:103px;top:196.5px">Start angle :</div>
 <div class="inp dis" style="left:107px;top:194.5px;width:54px;height:12px"><span>0deg</span></div>
 <div class="spin dis" style="left:163px;top:194.5px"><svg viewBox="0 0 11 12" width="11" height="12"><rect x="0.25" y="0.25" width="10.5" height="11.5" fill="#f0f0f0" stroke="#e2e2e2" stroke-width="0.5"/><path d="M0.5 6H10.5" stroke="#dedede" stroke-width="0.5"/><g fill="#5c5c5c"><path d="M5.6 2.1L7.1 3.9H4.1Z"/><path d="M5.6 10L7.1 8.2H4.1Z"/></g></svg></div>

 <div class="lab" style="left:0;width:103px;top:215px">End angle :</div>
 <div class="inp dis" style="left:107px;top:212.8px;width:54px;height:12.5px"><span>360deg</span></div>
 <div class="spin dis" style="left:163px;top:213px"><svg viewBox="0 0 11 12" width="11" height="12"><rect x="0.25" y="0.25" width="10.5" height="11.5" fill="#f0f0f0" stroke="#e2e2e2" stroke-width="0.5"/><path d="M0.5 6H10.5" stroke="#dedede" stroke-width="0.5"/><g fill="#5c5c5c"><path d="M5.6 2.1L7.1 3.9H4.1Z"/><path d="M5.6 10L7.1 8.2H4.1Z"/></g></svg></div>

 <div class="lab" style="left:0;width:103px;top:233.5px">Extension :</div>
 <div class="inp" style="left:107px;top:231.2px;width:54px;height:12.6px"><span>0mm</span></div>
 <div class="spin" style="left:163px;top:231.5px"><svg viewBox="0 0 11 12" width="11" height="12"><rect x="0.25" y="0.25" width="10.5" height="11.5" fill="#f0f0f0" stroke="#e2e2e2" stroke-width="0.5"/><path d="M0.5 6H10.5" stroke="#dedede" stroke-width="0.5"/><g fill="#1c1c1c"><path d="M5.6 1.9L7.3 4H3.9Z"/><path d="M5.6 10.2L7.3 8.1H3.9Z"/></g></svg></div>

 <div class="cb" style="left:79.5px;top:248.8px"></div><div class="cbl" style="left:90.5px;top:249px">Tangent extension</div>
 <div class="cb dis" style="left:79.5px;top:263.3px"></div><div class="cbl dis" style="left:90.5px;top:263px">Clockwise</div>
 <div class="cb" style="left:79.5px;top:277.5px"></div><div class="cbl" style="left:90.5px;top:277.2px">Reverse stepover</div>
 <div class="cb" style="left:79.5px;top:291.3px"><svg viewBox="0 0 9 9" width="9" height="9" style="position:absolute;left:-0.6px;top:-0.7px"><path d="M1.3 4.3 L3.4 6.5 L7.4 1.7" fill="none" stroke="#333" stroke-width="0.9"/></svg></div><div class="cbl" style="left:90.5px;top:290.9px">Staydown</div>

 <!-- XY stepover group -->
 <div class="grp" style="left:192px;top:24.5px;width:159px;height:100.6px"></div>
 <div class="glab" style="left:193px;top:20.5px">XY stepover</div>

 <div class="lab" style="left:150px;width:111px;top:39.3px">Method :</div>
 <div class="combo" style="left:264px;top:38px;width:86px;height:10.7px"><span>Distance</span><svg class="chev" viewBox="0 0 8 5"><path d="M1 1 L4 4 L7 1" fill="none" stroke="#8a8a8a" stroke-width="1"/></svg></div>

 <div class="lab" style="left:150px;width:127px;top:56.8px">Cut amount :</div>
 <div class="inp" style="left:279.8px;top:55.8px;width:54.2px;height:12.6px"><span>2.5mm</span></div>
 <div class="spin" style="left:336px;top:56.3px"><svg viewBox="0 0 11 12" width="11" height="12"><rect x="0.25" y="0.25" width="10.5" height="11.5" fill="#f0f0f0" stroke="#e2e2e2" stroke-width="0.5"/><path d="M0.5 6H10.5" stroke="#dedede" stroke-width="0.5"/><g fill="#1c1c1c"><path d="M5.6 1.9L7.3 4H3.9Z"/><path d="M5.6 10.2L7.3 8.1H3.9Z"/></g></svg></div>

 <div class="lab" style="left:150px;width:127.5px;top:73.8px">Max. scallop&nbsp; :</div>
 <div class="inp dis" style="left:279.8px;top:74.2px;width:54.2px;height:12.4px"><span>0.03mm</span></div>
 <div class="spin dis" style="left:336px;top:74.5px"><svg viewBox="0 0 11 12" width="11" height="12"><rect x="0.25" y="0.25" width="10.5" height="11.5" fill="#f0f0f0" stroke="#e2e2e2" stroke-width="0.5"/><path d="M0.5 6H10.5" stroke="#dedede" stroke-width="0.5"/><g fill="#5c5c5c"><path d="M5.6 2.1L7.1 3.9H4.1Z"/><path d="M5.6 10L7.1 8.2H4.1Z"/></g></svg></div>

 <div class="lab" style="left:150px;width:127.5px;top:91.8px">Stepover %&nbsp; :</div>
 <div class="inp dis" style="left:279.8px;top:92.2px;width:54.2px;height:12.4px"><span>4</span></div>
 <div class="spin dis" style="left:336px;top:92.5px"><svg viewBox="0 0 11 12" width="11" height="12"><rect x="0.25" y="0.25" width="10.5" height="11.5" fill="#f0f0f0" stroke="#e2e2e2" stroke-width="0.5"/><path d="M0.5 6H10.5" stroke="#dedede" stroke-width="0.5"/><g fill="#5c5c5c"><path d="M5.6 2.1L7.1 3.9H4.1Z"/><path d="M5.6 10L7.1 8.2H4.1Z"/></g></svg></div>

 <!-- bottom -->
 <svg class="ico" viewBox="0 0 10 16" width="10" height="16" style="position:absolute;left:2.5px;top:421.5px">
   <rect x="0.2" y="0.2" width="8.6" height="15" fill="#f8f8f8" opacity="0.7"/><rect x="0.3" y="0.3" width="3" height="2" fill="#00008b"/><rect x="1" y="2.3" width="2.4" height="1.6" fill="#222"/>
   <path d="M2.4 4 L7.6 4.4 L6.3 5.9 L9 9.6 L6.9 11.2 L4.4 7.6 L2.9 9.2 Z" fill="#ff0000"/>
   <rect x="3.6" y="12.6" width="5" height="1.7" rx="0.6" fill="#000"/>
 </svg>
 <div class="btn" style="left:165.7px">OK</div>
 <div class="btn" style="left:223.2px">Cancel</div>
 <div class="btn" style="left:280.8px">Preview</div>
 <div class="btn" style="left:338.4px">Help</div>
</div>
</body></html>
